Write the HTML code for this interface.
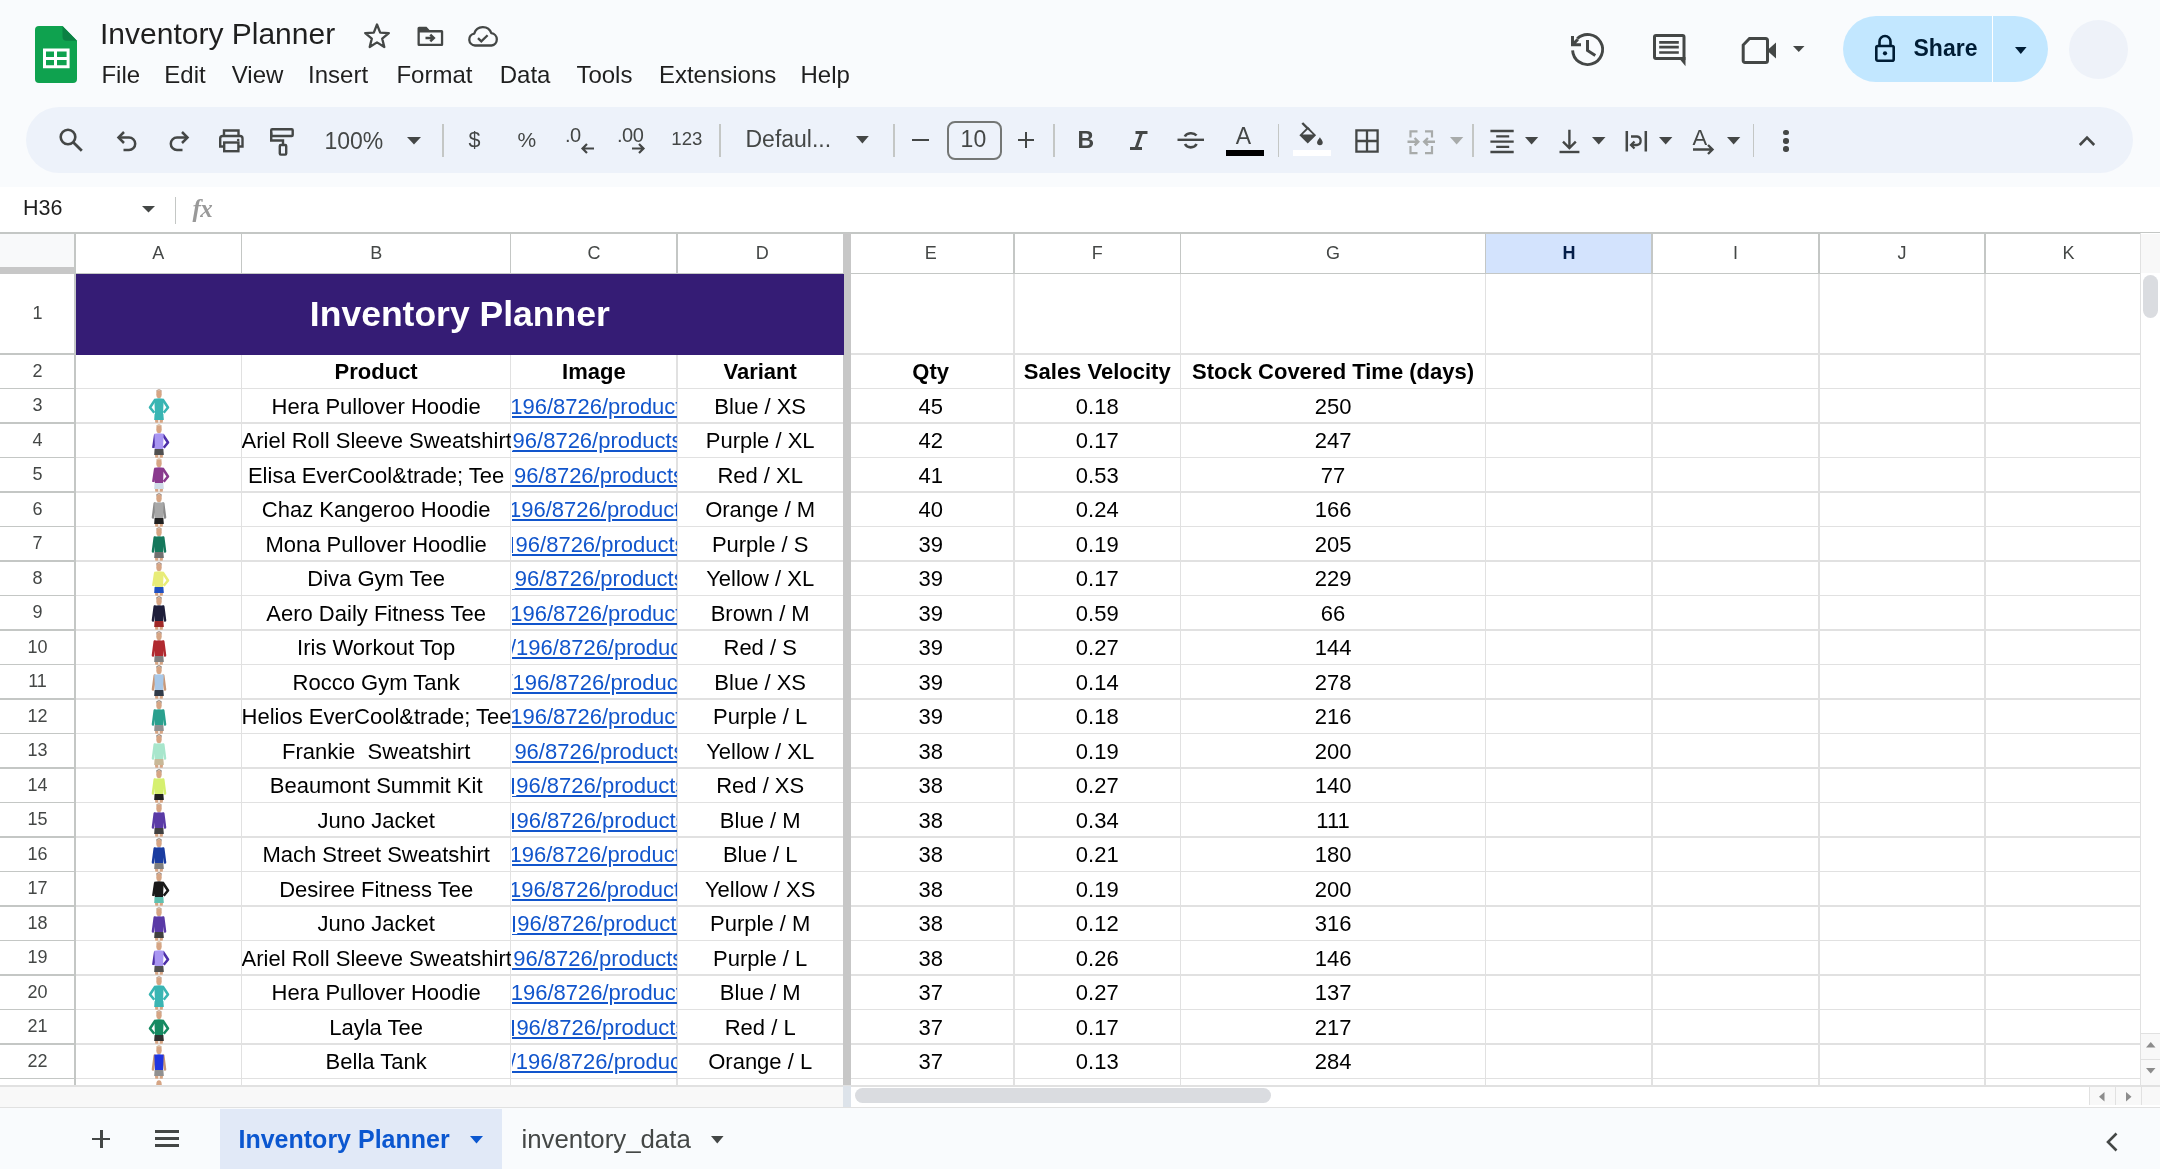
<!DOCTYPE html>
<html><head><meta charset="utf-8"><title>Inventory Planner - Google Sheets</title>
<style>
html,body{margin:0;padding:0;}
body{width:2160px;height:1169px;overflow:hidden;position:relative;background:#f9fbfd;font-family:"Liberation Sans",sans-serif;}
svg{display:block;overflow:visible}
</style></head><body>
<div style="position:absolute;left:0;top:0;width:2160px;height:1169px;overflow:hidden;will-change:transform">
<div style="position:absolute;left:0.00px;top:0.00px;width:2160.00px;height:187.00px;background:#f9fbfd;"></div>
<svg style="position:absolute;left:35.00px;top:26.00px" width="42" height="57" viewBox="0 0 42 57">
<path d="M4 0H27.5L42 14.7V53A4 4 0 0 1 38 57H4A4 4 0 0 1 0 53V4A4 4 0 0 1 4 0Z" fill="#0fa24f"/>
<path d="M27.5 0L42 14.7H31.5A4 4 0 0 1 27.5 10.7Z" fill="#0b8043"/>
<path d="M8 22.6H34.6V42.2H8Z M11 25.6V31H19V25.6Z M22 25.6V31H31.6V25.6Z M11 34V39.2H19V34Z M22 34V39.2H31.6V34Z" fill="#fff" fill-rule="evenodd"/>
</svg>
<div style="position:absolute;left:100.00px;top:16.65px;font-size:30px;line-height:33.510px;color:#1f1f1f;font-weight:normal;text-align:left;white-space:nowrap;">Inventory Planner</div>
<svg style="position:absolute;left:363.00px;top:22.00px" width="28" height="27" viewBox="0 0 28 27"><path d="M14 2.5L17.2 10.6L25.8 11.1L19.2 16.6L21.3 25L14 20.4L6.7 25L8.8 16.6L2.2 11.1L10.8 10.6Z" fill="none" stroke="#444746" stroke-width="2.3" stroke-linejoin="round"/></svg>
<svg style="position:absolute;left:415.00px;top:26.00px" width="30" height="22" viewBox="0 0 30 22"><path d="M2.5 2.3Q2.5 0.8 4 0.8H11.5L14.5 3.9H26.7Q28.2 3.9 28.2 5.4V18.5Q28.2 20 26.7 20H4Q2.5 20 2.5 18.5Z M4.8 6.4V17.7H25.9V6.4Z" fill="#444746" fill-rule="evenodd"/><path d="M10.5 12H18.5M15.3 8.6L18.8 12L15.3 15.4" fill="none" stroke="#444746" stroke-width="2.5"/></svg>
<svg style="position:absolute;left:467.00px;top:25.00px" width="32" height="23" viewBox="0 0 32 23"><path d="M8 20.5A6 6 0 0 1 7.2 8.6A9 9 0 0 1 24.3 8.2A6.2 6.2 0 0 1 24.5 20.5Z" fill="none" stroke="#444746" stroke-width="2.3" stroke-linejoin="round"/><path d="M11 13.2L14.3 16.4L20.6 10.2" fill="none" stroke="#444746" stroke-width="2.3"/></svg>
<div style="position:absolute;left:101.40px;top:62.28px;font-size:24px;line-height:26.808px;color:#1f1f1f;font-weight:normal;text-align:left;white-space:nowrap;">File</div>
<div style="position:absolute;left:164.30px;top:62.28px;font-size:24px;line-height:26.808px;color:#1f1f1f;font-weight:normal;text-align:left;white-space:nowrap;">Edit</div>
<div style="position:absolute;left:231.80px;top:62.28px;font-size:24px;line-height:26.808px;color:#1f1f1f;font-weight:normal;text-align:left;white-space:nowrap;">View</div>
<div style="position:absolute;left:308.10px;top:62.28px;font-size:24px;line-height:26.808px;color:#1f1f1f;font-weight:normal;text-align:left;white-space:nowrap;">Insert</div>
<div style="position:absolute;left:396.40px;top:62.28px;font-size:24px;line-height:26.808px;color:#1f1f1f;font-weight:normal;text-align:left;white-space:nowrap;">Format</div>
<div style="position:absolute;left:499.75px;top:62.28px;font-size:24px;line-height:26.808px;color:#1f1f1f;font-weight:normal;text-align:left;white-space:nowrap;">Data</div>
<div style="position:absolute;left:576.40px;top:62.28px;font-size:24px;line-height:26.808px;color:#1f1f1f;font-weight:normal;text-align:left;white-space:nowrap;">Tools</div>
<div style="position:absolute;left:658.90px;top:62.28px;font-size:24px;line-height:26.808px;color:#1f1f1f;font-weight:normal;text-align:left;white-space:nowrap;">Extensions</div>
<div style="position:absolute;left:800.50px;top:62.28px;font-size:24px;line-height:26.808px;color:#1f1f1f;font-weight:normal;text-align:left;white-space:nowrap;">Help</div>
<svg style="position:absolute;left:1565.00px;top:28.00px" width="45" height="42" viewBox="0 0 45 42"><path d="M7.6 22.3A15 15 0 1 0 12.3 10.6" fill="none" stroke="#444746" stroke-width="2.9"/>
<path d="M7.5 8V16.8H16M7.5 16.8L12.8 11.4" fill="none" stroke="#444746" stroke-width="3"/><path d="M22.5 12V22.5L30.3 27.6" fill="none" stroke="#444746" stroke-width="3"/></svg>
<svg style="position:absolute;left:1652.00px;top:33.00px" width="36" height="36" viewBox="0 0 36 36"><path d="M2.5 4A1.5 1.5 0 0 1 4 2.5H30.5A1.5 1.5 0 0 1 32 4V25.5H4A1.5 1.5 0 0 1 2.5 24Z" fill="none" stroke="#444746" stroke-width="3"/>
<path d="M26 24L33.5 24V33.3Z" fill="#444746"/><path d="M7.2 9.3H26.8M7.2 14.2H26.8M7.2 19.5H26.8" stroke="#444746" stroke-width="2.7"/></svg>
<svg style="position:absolute;left:1741.00px;top:36.00px" width="38" height="29" viewBox="0 0 38 29"><path d="M8.5 2.5H24.5A2 2 0 0 1 26.5 4.5V24.5A2 2 0 0 1 24.5 26.5H4A1.8 1.8 0 0 1 2.2 24.7V9Z" fill="none" stroke="#444746" stroke-width="3"/>
<path d="M26 14.5L35 6.5V22.5Z" fill="#444746"/></svg>
<svg style="position:absolute;left:1793.45px;top:45.60px" width="11.5" height="6.1" viewBox="0 0 11.5 6.1"><path d="M0 0H11.5L5.75 6.1Z" fill="#444746"/></svg>
<div style="position:absolute;left:1843.00px;top:16.40px;width:204.50px;height:65.70px;background:#c2e7ff;border-radius:33px;"></div>
<div style="position:absolute;left:1992.20px;top:16.40px;width:1.20px;height:65.70px;background:#ffffff;"></div>
<svg style="position:absolute;left:1873.00px;top:33.00px" width="24" height="30" viewBox="0 0 24 30"><path d="M6.5 13V8.5A5.5 5.5 0 0 1 17.5 8.5V13" fill="none" stroke="#001d35" stroke-width="2.6"/>
<rect x="3.3" y="13" width="17.4" height="14.7" rx="1.5" fill="none" stroke="#001d35" stroke-width="2.6"/><circle cx="12" cy="20.3" r="2.1" fill="#001d35"/></svg>
<div style="position:absolute;left:1913.50px;top:36.39px;font-size:23px;line-height:25.691px;color:#001d35;font-weight:bold;text-align:left;white-space:nowrap;">Share</div>
<svg style="position:absolute;left:2014.80px;top:47.40px" width="11.6" height="6.9" viewBox="0 0 11.6 6.9"><path d="M0 0H11.6L5.8 6.9Z" fill="#001d35"/></svg>
<div style="position:absolute;left:2068.7px;top:19.9px;width:59.5px;height:59px;border-radius:50%;background:#eef2f9"></div>
<div style="position:absolute;left:26.00px;top:107.00px;width:2107.00px;height:66.30px;background:#edf2fa;border-radius:33px;"></div>
<svg style="position:absolute;left:58.00px;top:127.00px" width="27" height="27" viewBox="0 0 27 27"><circle cx="10" cy="10" r="7.3" fill="none" stroke="#444746" stroke-width="2.6"/><path d="M15.2 15.2L23.8 23.8" stroke="#444746" stroke-width="2.8"/></svg>
<svg style="position:absolute;left:115.00px;top:129.00px" width="24" height="22" viewBox="0 0 24 22"><path d="M3.5 8.5H14A6.2 6.2 0 0 1 14 20.9H8.5" fill="none" stroke="#444746" stroke-width="2.5"/><path d="M9 3L3.5 8.5L9 14" fill="none" stroke="#444746" stroke-width="2.5"/></svg>
<svg style="position:absolute;left:167.00px;top:129.00px" width="24" height="22" viewBox="0 0 24 22"><path d="M20.5 8.5H10A6.2 6.2 0 0 0 10 20.9H15.5" fill="none" stroke="#444746" stroke-width="2.5"/><path d="M15 3L20.5 8.5L15 14" fill="none" stroke="#444746" stroke-width="2.5"/></svg>
<svg style="position:absolute;left:217.00px;top:128.00px" width="30" height="26" viewBox="0 0 30 26"><path d="M7 8V2.5H21.5V8" fill="none" stroke="#444746" stroke-width="2.4"/>
<path d="M7 18.5H3.2V10.5A2.5 2.5 0 0 1 5.7 8H23A2.5 2.5 0 0 1 25.5 10.5V18.5H21.5" fill="none" stroke="#444746" stroke-width="2.4"/>
<rect x="7.2" y="14.5" width="14.2" height="8.7" fill="none" stroke="#444746" stroke-width="2.4"/><circle cx="21.2" cy="12" r="1.3" fill="#444746"/></svg>
<svg style="position:absolute;left:269.00px;top:127.00px" width="28" height="30" viewBox="0 0 28 30"><rect x="2.2" y="2.2" width="21.5" height="6.8" rx="1" fill="none" stroke="#444746" stroke-width="2.4"/>
<path d="M2.2 5.5V13.5H14V18" fill="none" stroke="#444746" stroke-width="2.4"/><rect x="10.8" y="18" width="6.4" height="9.6" rx="1" fill="none" stroke="#444746" stroke-width="2.4"/></svg>
<div style="position:absolute;left:324.50px;top:128.59px;font-size:23px;line-height:25.691px;color:#444746;font-weight:normal;text-align:left;white-space:nowrap;">100%</div>
<svg style="position:absolute;left:407.20px;top:136.80px" width="14" height="7.4" viewBox="0 0 14 7.4"><path d="M0 0H14L7.0 7.4Z" fill="#444746"/></svg>
<div style="position:absolute;left:442.25px;top:124.00px;width:1.50px;height:32.50px;background:#c4c7c5;"></div>
<div style="position:absolute;left:468.50px;top:127.74px;font-size:21.5px;line-height:24.015px;color:#444746;font-weight:normal;text-align:left;white-space:nowrap;">$</div>
<div style="position:absolute;left:517.50px;top:128.00px;font-size:21px;line-height:23.457px;color:#444746;font-weight:normal;text-align:left;white-space:nowrap;">%</div>
<div style="position:absolute;left:565.00px;top:124.40px;font-size:20px;line-height:22.340px;color:#444746;font-weight:normal;text-align:left;white-space:nowrap;letter-spacing:-0.5px">.0</div>
<svg style="position:absolute;left:578.00px;top:141.00px" width="18" height="14" viewBox="0 0 18 14"><path d="M16 7.5H4.5M9 3L4.5 7.5L9 12" fill="none" stroke="#444746" stroke-width="2.2"/></svg>
<div style="position:absolute;left:617.00px;top:124.40px;font-size:20px;line-height:22.340px;color:#444746;font-weight:normal;text-align:left;white-space:nowrap;letter-spacing:-0.5px">.00</div>
<svg style="position:absolute;left:630.00px;top:141.00px" width="18" height="14" viewBox="0 0 18 14"><path d="M2 7.5H13.5M9 3L13.5 7.5L9 12" fill="none" stroke="#444746" stroke-width="2.2"/></svg>
<div style="position:absolute;left:671.30px;top:129.17px;font-size:18.6px;line-height:20.776px;color:#444746;font-weight:normal;text-align:left;white-space:nowrap;">123</div>
<div style="position:absolute;left:719.25px;top:124.00px;width:1.50px;height:32.50px;background:#c4c7c5;"></div>
<div style="position:absolute;left:745.50px;top:126.78px;font-size:23px;line-height:25.691px;color:#444746;font-weight:normal;text-align:left;white-space:nowrap;">Defaul...</div>
<svg style="position:absolute;left:856.20px;top:135.90px" width="12.8" height="7.4" viewBox="0 0 12.8 7.4"><path d="M0 0H12.8L6.4 7.4Z" fill="#444746"/></svg>
<div style="position:absolute;left:893.25px;top:124.00px;width:1.50px;height:32.50px;background:#c4c7c5;"></div>
<div style="position:absolute;left:912.40px;top:138.50px;width:16.60px;height:2.20px;background:#444746;"></div>
<div style="position:absolute;left:946.5px;top:120.8px;width:55.5px;height:39px;box-sizing:border-box;border:2px solid #747775;border-radius:8px"></div>
<div style="position:absolute;left:960.60px;top:127.19px;font-size:23px;line-height:25.691px;color:#444746;font-weight:normal;text-align:left;white-space:nowrap;">10</div>
<div style="position:absolute;left:1017.80px;top:138.90px;width:16.60px;height:2.40px;background:#444746;"></div>
<div style="position:absolute;left:1024.90px;top:131.80px;width:2.40px;height:16.60px;background:#444746;"></div>
<div style="position:absolute;left:1053.25px;top:124.00px;width:1.50px;height:32.50px;background:#c4c7c5;"></div>
<div style="position:absolute;left:1077.50px;top:128.38px;font-size:23px;line-height:25.691px;color:#444746;font-weight:bold;text-align:left;white-space:nowrap;">B</div>
<svg style="position:absolute;left:1128.00px;top:130.00px" width="22" height="21" viewBox="0 0 22 21"><path d="M7.5 2.5H19.5M2 18.5H14M13.6 2.5L8 18.5" fill="none" stroke="#444746" stroke-width="3"/></svg>
<svg style="position:absolute;left:1176.00px;top:130.00px" width="30" height="22" viewBox="0 0 30 22"><path d="M1.5 9.8H28" stroke="#444746" stroke-width="2.4"/><path d="M20.5 5.5A6.5 4.8 0 0 0 8.8 6.5M9 14A6.3 5.5 0 0 0 20.6 14" fill="none" stroke="#444746" stroke-width="2.6"/></svg>
<div style="position:absolute;left:1235.80px;top:124.38px;font-size:23px;line-height:25.691px;color:#444746;font-weight:normal;text-align:left;white-space:nowrap;">A</div>
<div style="position:absolute;left:1226.00px;top:149.70px;width:37.70px;height:6.40px;background:#000000;"></div>
<div style="position:absolute;left:1277.85px;top:124.00px;width:1.50px;height:32.50px;background:#c4c7c5;"></div>
<svg style="position:absolute;left:1297.00px;top:121.00px" width="28" height="25" viewBox="0 0 28 25"><path d="M5.3 2L12.4 9.1" stroke="#444746" stroke-width="2.4"/><path d="M2.4 14.2L10.75 5.85L19.1 14.2L10.75 22.55Z" fill="#444746"/><path d="M5.6 13.6L10.75 8.45L15.9 13.6Z" fill="#edf2fa"/><path d="M22.9 16.3C20.6 19.6 20.1 20.6 20.1 21.5A2.8 2.8 0 0 0 25.7 21.5C25.7 20.6 25.2 19.6 22.9 16.3Z" fill="#444746"/></svg>
<div style="position:absolute;left:1293.00px;top:149.70px;width:37.80px;height:6.40px;background:#ffffff;"></div>
<svg style="position:absolute;left:1354.00px;top:128.00px" width="26" height="26" viewBox="0 0 26 26"><path d="M2.4 2.4H23.6V23.6H2.4Z M13 2.4V23.6 M2.4 13H23.6" fill="none" stroke="#444746" stroke-width="2.3"/></svg>
<svg style="position:absolute;left:1407.00px;top:128.50px" width="29" height="26" viewBox="0 0 29 26"><path d="M10.5 2.3H3.5V8.5 M3.5 17V24.2H10.5 M18 2.3H25V8.5 M25 17V24.2H18" fill="none" stroke="#a8abaa" stroke-width="2.2"/><path d="M0.5 12.7H11 M7.6 9L11.3 12.7L7.6 16.4 M28 12.7H17.5 M20.9 9L17.2 12.7L20.9 16.4" fill="none" stroke="#a8abaa" stroke-width="2.4"/></svg>
<svg style="position:absolute;left:1449.75px;top:137.00px" width="13.3" height="7.4" viewBox="0 0 13.3 7.4"><path d="M0 0H13.3L6.65 7.4Z" fill="#a8abaa"/></svg>
<div style="position:absolute;left:1472.25px;top:124.00px;width:1.50px;height:32.50px;background:#c4c7c5;"></div>
<svg style="position:absolute;left:1489.00px;top:128.50px" width="27" height="26" viewBox="0 0 27 26"><path d="M1.4 2H24.7 M7.2 7.3H20.2 M1.4 12.6H24.7 M7.2 17.8H20.2 M1.4 23H24.7" stroke="#444746" stroke-width="2.3"/></svg>
<svg style="position:absolute;left:1524.80px;top:137.00px" width="13.2" height="7.4" viewBox="0 0 13.2 7.4"><path d="M0 0H13.2L6.6 7.4Z" fill="#444746"/></svg>
<svg style="position:absolute;left:1558.00px;top:128.50px" width="23" height="26" viewBox="0 0 23 26"><path d="M11.4 0.8V19 M5 12.7L11.4 19.1L17.8 12.7" fill="none" stroke="#444746" stroke-width="2.4"/><path d="M1.5 23H21.4" stroke="#444746" stroke-width="2.4"/></svg>
<svg style="position:absolute;left:1592.25px;top:137.00px" width="13.5" height="7.4" viewBox="0 0 13.5 7.4"><path d="M0 0H13.5L6.75 7.4Z" fill="#444746"/></svg>
<svg style="position:absolute;left:1624.00px;top:130.00px" width="25" height="23" viewBox="0 0 25 23"><path d="M2.8 1V21.5 M21.8 1V21.5" stroke="#444746" stroke-width="2.5"/><path d="M7.5 15H13A4.3 4.3 0 0 0 13 6.5H7" fill="none" stroke="#444746" stroke-width="2.3"/><path d="M10.5 11.5L7 15L10.5 18.5" fill="none" stroke="#444746" stroke-width="2.3"/></svg>
<svg style="position:absolute;left:1659.40px;top:137.00px" width="13.4" height="7.4" viewBox="0 0 13.4 7.4"><path d="M0 0H13.4L6.7 7.4Z" fill="#444746"/></svg>
<div style="position:absolute;left:1692.50px;top:126.09px;font-size:22px;line-height:24.574px;color:#444746;font-weight:normal;text-align:left;white-space:nowrap;">A</div>
<svg style="position:absolute;left:1692.00px;top:141.00px" width="26" height="14" viewBox="0 0 26 14"><path d="M1 8.5H20M16 4L20.5 8.5L16 13" fill="none" stroke="#444746" stroke-width="2.4"/></svg>
<svg style="position:absolute;left:1726.95px;top:137.00px" width="13.3" height="7.4" viewBox="0 0 13.3 7.4"><path d="M0 0H13.3L6.65 7.4Z" fill="#444746"/></svg>
<div style="position:absolute;left:1752.75px;top:124.00px;width:1.50px;height:32.50px;background:#c4c7c5;"></div>
<div style="position:absolute;left:1783.3px;top:130.0px;width:5.4px;height:5.4px;border-radius:50%;background:#444746"></div>
<div style="position:absolute;left:1783.3px;top:138.3px;width:5.4px;height:5.4px;border-radius:50%;background:#444746"></div>
<div style="position:absolute;left:1783.3px;top:146.3px;width:5.4px;height:5.4px;border-radius:50%;background:#444746"></div>
<svg style="position:absolute;left:2075.00px;top:132.00px" width="24" height="16" viewBox="0 0 24 16"><path d="M4.8 13L12 5.6L19.2 13" fill="none" stroke="#444746" stroke-width="2.6"/></svg>
<div style="position:absolute;left:0.00px;top:187.00px;width:2160.00px;height:46.00px;background:#ffffff;"></div>
<div style="position:absolute;left:23.00px;top:196.44px;font-size:21.5px;line-height:24.015px;color:#1f1f1f;font-weight:normal;text-align:left;white-space:nowrap;">H36</div>
<svg style="position:absolute;left:142.00px;top:205.90px" width="13" height="6.6" viewBox="0 0 13 6.6"><path d="M0 0H13L6.5 6.6Z" fill="#444746"/></svg>
<div style="position:absolute;left:174.80px;top:197.00px;width:1.50px;height:27.00px;background:#c4c7c5;"></div>
<div style="position:absolute;left:192.50px;top:194.88px;font-size:25px;line-height:27.925px;color:#999999;font-weight:bold;text-align:left;white-space:nowrap;font-family:'Liberation Serif',serif;font-style:italic;letter-spacing:-0.5px">fx</div>
<div style="position:absolute;left:0.00px;top:233.00px;width:2160.00px;height:853.00px;background:#ffffff;"></div>
<div style="position:absolute;left:0.00px;top:233.00px;width:74.50px;height:34.00px;background:#f8f9fa;"></div>
<div style="position:absolute;left:0.00px;top:267.30px;width:74.50px;height:6.30px;background:#c7c7c7;"></div>
<div style="position:absolute;left:1486.30px;top:233.50px;width:165.40px;height:39.00px;background:#d3e3fd;"></div>
<div style="position:absolute;left:75.00px;top:243.01px;width:166.6px;font-size:18px;line-height:20.106px;color:#444746;font-weight:normal;text-align:center;white-space:nowrap;">A</div>
<div style="position:absolute;left:241.60px;top:243.01px;width:269.1px;font-size:18px;line-height:20.106px;color:#444746;font-weight:normal;text-align:center;white-space:nowrap;">B</div>
<div style="position:absolute;left:510.70px;top:243.01px;width:166.40000000000003px;font-size:18px;line-height:20.106px;color:#444746;font-weight:normal;text-align:center;white-space:nowrap;">C</div>
<div style="position:absolute;left:677.10px;top:243.01px;width:170.19999999999993px;font-size:18px;line-height:20.106px;color:#444746;font-weight:normal;text-align:center;white-space:nowrap;">D</div>
<div style="position:absolute;left:847.30px;top:243.01px;width:166.70000000000005px;font-size:18px;line-height:20.106px;color:#444746;font-weight:normal;text-align:center;white-space:nowrap;">E</div>
<div style="position:absolute;left:1014.00px;top:243.01px;width:166.5px;font-size:18px;line-height:20.106px;color:#444746;font-weight:normal;text-align:center;white-space:nowrap;">F</div>
<div style="position:absolute;left:1180.50px;top:243.01px;width:305.0999999999999px;font-size:18px;line-height:20.106px;color:#444746;font-weight:normal;text-align:center;white-space:nowrap;">G</div>
<div style="position:absolute;left:1485.60px;top:243.01px;width:166.60000000000014px;font-size:18px;line-height:20.106px;color:#041e49;font-weight:bold;text-align:center;white-space:nowrap;">H</div>
<div style="position:absolute;left:1652.20px;top:243.01px;width:166.5999999999999px;font-size:18px;line-height:20.106px;color:#444746;font-weight:normal;text-align:center;white-space:nowrap;">I</div>
<div style="position:absolute;left:1818.80px;top:243.01px;width:166.4000000000001px;font-size:18px;line-height:20.106px;color:#444746;font-weight:normal;text-align:center;white-space:nowrap;">J</div>
<div style="position:absolute;left:1985.20px;top:243.01px;width:166.39999999999986px;font-size:18px;line-height:20.106px;color:#444746;font-weight:normal;text-align:center;white-space:nowrap;">K</div>
<div style="position:absolute;left:0.00px;top:303.41px;width:75px;font-size:18px;line-height:20.106px;color:#444746;font-weight:normal;text-align:center;white-space:nowrap;">1</div>
<div style="position:absolute;left:0.00px;top:361.06px;width:75px;font-size:18px;line-height:20.106px;color:#444746;font-weight:normal;text-align:center;white-space:nowrap;">2</div>
<div style="position:absolute;left:0.00px;top:395.46px;width:75px;font-size:18px;line-height:20.106px;color:#444746;font-weight:normal;text-align:center;white-space:nowrap;">3</div>
<div style="position:absolute;left:0.00px;top:429.96px;width:75px;font-size:18px;line-height:20.106px;color:#444746;font-weight:normal;text-align:center;white-space:nowrap;">4</div>
<div style="position:absolute;left:0.00px;top:464.46px;width:75px;font-size:18px;line-height:20.106px;color:#444746;font-weight:normal;text-align:center;white-space:nowrap;">5</div>
<div style="position:absolute;left:0.00px;top:498.96px;width:75px;font-size:18px;line-height:20.106px;color:#444746;font-weight:normal;text-align:center;white-space:nowrap;">6</div>
<div style="position:absolute;left:0.00px;top:533.46px;width:75px;font-size:18px;line-height:20.106px;color:#444746;font-weight:normal;text-align:center;white-space:nowrap;">7</div>
<div style="position:absolute;left:0.00px;top:567.96px;width:75px;font-size:18px;line-height:20.106px;color:#444746;font-weight:normal;text-align:center;white-space:nowrap;">8</div>
<div style="position:absolute;left:0.00px;top:602.46px;width:75px;font-size:18px;line-height:20.106px;color:#444746;font-weight:normal;text-align:center;white-space:nowrap;">9</div>
<div style="position:absolute;left:0.00px;top:636.96px;width:75px;font-size:18px;line-height:20.106px;color:#444746;font-weight:normal;text-align:center;white-space:nowrap;">10</div>
<div style="position:absolute;left:0.00px;top:671.46px;width:75px;font-size:18px;line-height:20.106px;color:#444746;font-weight:normal;text-align:center;white-space:nowrap;">11</div>
<div style="position:absolute;left:0.00px;top:705.96px;width:75px;font-size:18px;line-height:20.106px;color:#444746;font-weight:normal;text-align:center;white-space:nowrap;">12</div>
<div style="position:absolute;left:0.00px;top:740.46px;width:75px;font-size:18px;line-height:20.106px;color:#444746;font-weight:normal;text-align:center;white-space:nowrap;">13</div>
<div style="position:absolute;left:0.00px;top:774.96px;width:75px;font-size:18px;line-height:20.106px;color:#444746;font-weight:normal;text-align:center;white-space:nowrap;">14</div>
<div style="position:absolute;left:0.00px;top:809.46px;width:75px;font-size:18px;line-height:20.106px;color:#444746;font-weight:normal;text-align:center;white-space:nowrap;">15</div>
<div style="position:absolute;left:0.00px;top:843.96px;width:75px;font-size:18px;line-height:20.106px;color:#444746;font-weight:normal;text-align:center;white-space:nowrap;">16</div>
<div style="position:absolute;left:0.00px;top:878.46px;width:75px;font-size:18px;line-height:20.106px;color:#444746;font-weight:normal;text-align:center;white-space:nowrap;">17</div>
<div style="position:absolute;left:0.00px;top:912.96px;width:75px;font-size:18px;line-height:20.106px;color:#444746;font-weight:normal;text-align:center;white-space:nowrap;">18</div>
<div style="position:absolute;left:0.00px;top:947.46px;width:75px;font-size:18px;line-height:20.106px;color:#444746;font-weight:normal;text-align:center;white-space:nowrap;">19</div>
<div style="position:absolute;left:0.00px;top:981.96px;width:75px;font-size:18px;line-height:20.106px;color:#444746;font-weight:normal;text-align:center;white-space:nowrap;">20</div>
<div style="position:absolute;left:0.00px;top:1016.46px;width:75px;font-size:18px;line-height:20.106px;color:#444746;font-weight:normal;text-align:center;white-space:nowrap;">21</div>
<div style="position:absolute;left:0.00px;top:1050.96px;width:75px;font-size:18px;line-height:20.106px;color:#444746;font-weight:normal;text-align:center;white-space:nowrap;">22</div>
<div style="position:absolute;left:75.00px;top:353.20px;width:2065.50px;height:1.60px;background:#e1e1e1;"></div>
<div style="position:absolute;left:75.00px;top:387.50px;width:2065.50px;height:1.60px;background:#e1e1e1;"></div>
<div style="position:absolute;left:75.00px;top:422.00px;width:2065.50px;height:1.60px;background:#e1e1e1;"></div>
<div style="position:absolute;left:75.00px;top:456.50px;width:2065.50px;height:1.60px;background:#e1e1e1;"></div>
<div style="position:absolute;left:75.00px;top:491.00px;width:2065.50px;height:1.60px;background:#e1e1e1;"></div>
<div style="position:absolute;left:75.00px;top:525.50px;width:2065.50px;height:1.60px;background:#e1e1e1;"></div>
<div style="position:absolute;left:75.00px;top:560.00px;width:2065.50px;height:1.60px;background:#e1e1e1;"></div>
<div style="position:absolute;left:75.00px;top:594.50px;width:2065.50px;height:1.60px;background:#e1e1e1;"></div>
<div style="position:absolute;left:75.00px;top:629.00px;width:2065.50px;height:1.60px;background:#e1e1e1;"></div>
<div style="position:absolute;left:75.00px;top:663.50px;width:2065.50px;height:1.60px;background:#e1e1e1;"></div>
<div style="position:absolute;left:75.00px;top:698.00px;width:2065.50px;height:1.60px;background:#e1e1e1;"></div>
<div style="position:absolute;left:75.00px;top:732.50px;width:2065.50px;height:1.60px;background:#e1e1e1;"></div>
<div style="position:absolute;left:75.00px;top:767.00px;width:2065.50px;height:1.60px;background:#e1e1e1;"></div>
<div style="position:absolute;left:75.00px;top:801.50px;width:2065.50px;height:1.60px;background:#e1e1e1;"></div>
<div style="position:absolute;left:75.00px;top:836.00px;width:2065.50px;height:1.60px;background:#e1e1e1;"></div>
<div style="position:absolute;left:75.00px;top:870.50px;width:2065.50px;height:1.60px;background:#e1e1e1;"></div>
<div style="position:absolute;left:75.00px;top:905.00px;width:2065.50px;height:1.60px;background:#e1e1e1;"></div>
<div style="position:absolute;left:75.00px;top:939.50px;width:2065.50px;height:1.60px;background:#e1e1e1;"></div>
<div style="position:absolute;left:75.00px;top:974.00px;width:2065.50px;height:1.60px;background:#e1e1e1;"></div>
<div style="position:absolute;left:75.00px;top:1008.50px;width:2065.50px;height:1.60px;background:#e1e1e1;"></div>
<div style="position:absolute;left:75.00px;top:1043.00px;width:2065.50px;height:1.60px;background:#e1e1e1;"></div>
<div style="position:absolute;left:75.00px;top:1077.50px;width:2065.50px;height:1.60px;background:#e1e1e1;"></div>
<div style="position:absolute;left:240.80px;top:273.00px;width:1.60px;height:813.00px;background:#e1e1e1;"></div>
<div style="position:absolute;left:509.90px;top:273.00px;width:1.60px;height:813.00px;background:#e1e1e1;"></div>
<div style="position:absolute;left:676.30px;top:273.00px;width:1.60px;height:813.00px;background:#e1e1e1;"></div>
<div style="position:absolute;left:1013.20px;top:273.00px;width:1.60px;height:813.00px;background:#e1e1e1;"></div>
<div style="position:absolute;left:1179.70px;top:273.00px;width:1.60px;height:813.00px;background:#e1e1e1;"></div>
<div style="position:absolute;left:1484.80px;top:273.00px;width:1.60px;height:813.00px;background:#e1e1e1;"></div>
<div style="position:absolute;left:1651.40px;top:273.00px;width:1.60px;height:813.00px;background:#e1e1e1;"></div>
<div style="position:absolute;left:1818.00px;top:273.00px;width:1.60px;height:813.00px;background:#e1e1e1;"></div>
<div style="position:absolute;left:1984.40px;top:273.00px;width:1.60px;height:813.00px;background:#e1e1e1;"></div>
<div style="position:absolute;left:2139.70px;top:273.00px;width:1.60px;height:813.00px;background:#e1e1e1;"></div>
<div style="position:absolute;left:240.80px;top:233.00px;width:1.60px;height:40.00px;background:#c4c7c5;"></div>
<div style="position:absolute;left:509.90px;top:233.00px;width:1.60px;height:40.00px;background:#c4c7c5;"></div>
<div style="position:absolute;left:676.30px;top:233.00px;width:1.60px;height:40.00px;background:#c4c7c5;"></div>
<div style="position:absolute;left:1013.20px;top:233.00px;width:1.60px;height:40.00px;background:#c4c7c5;"></div>
<div style="position:absolute;left:1179.70px;top:233.00px;width:1.60px;height:40.00px;background:#c4c7c5;"></div>
<div style="position:absolute;left:1484.80px;top:233.00px;width:1.60px;height:40.00px;background:#c4c7c5;"></div>
<div style="position:absolute;left:1651.40px;top:233.00px;width:1.60px;height:40.00px;background:#c4c7c5;"></div>
<div style="position:absolute;left:1818.00px;top:233.00px;width:1.60px;height:40.00px;background:#c4c7c5;"></div>
<div style="position:absolute;left:1984.40px;top:233.00px;width:1.60px;height:40.00px;background:#c4c7c5;"></div>
<div style="position:absolute;left:2139.70px;top:233.00px;width:1.60px;height:40.00px;background:#c4c7c5;"></div>
<div style="position:absolute;left:74.20px;top:233.00px;width:1.60px;height:853.00px;background:#c4c7c5;"></div>
<div style="position:absolute;left:0.00px;top:232.20px;width:2160.00px;height:1.60px;background:#c4c7c5;"></div>
<div style="position:absolute;left:75.00px;top:272.60px;width:2066.00px;height:1.60px;background:#c4c7c5;"></div>
<div style="position:absolute;left:0.00px;top:353.20px;width:75.00px;height:1.60px;background:#c4c7c5;"></div>
<div style="position:absolute;left:0.00px;top:387.50px;width:75.00px;height:1.60px;background:#c4c7c5;"></div>
<div style="position:absolute;left:0.00px;top:422.00px;width:75.00px;height:1.60px;background:#c4c7c5;"></div>
<div style="position:absolute;left:0.00px;top:456.50px;width:75.00px;height:1.60px;background:#c4c7c5;"></div>
<div style="position:absolute;left:0.00px;top:491.00px;width:75.00px;height:1.60px;background:#c4c7c5;"></div>
<div style="position:absolute;left:0.00px;top:525.50px;width:75.00px;height:1.60px;background:#c4c7c5;"></div>
<div style="position:absolute;left:0.00px;top:560.00px;width:75.00px;height:1.60px;background:#c4c7c5;"></div>
<div style="position:absolute;left:0.00px;top:594.50px;width:75.00px;height:1.60px;background:#c4c7c5;"></div>
<div style="position:absolute;left:0.00px;top:629.00px;width:75.00px;height:1.60px;background:#c4c7c5;"></div>
<div style="position:absolute;left:0.00px;top:663.50px;width:75.00px;height:1.60px;background:#c4c7c5;"></div>
<div style="position:absolute;left:0.00px;top:698.00px;width:75.00px;height:1.60px;background:#c4c7c5;"></div>
<div style="position:absolute;left:0.00px;top:732.50px;width:75.00px;height:1.60px;background:#c4c7c5;"></div>
<div style="position:absolute;left:0.00px;top:767.00px;width:75.00px;height:1.60px;background:#c4c7c5;"></div>
<div style="position:absolute;left:0.00px;top:801.50px;width:75.00px;height:1.60px;background:#c4c7c5;"></div>
<div style="position:absolute;left:0.00px;top:836.00px;width:75.00px;height:1.60px;background:#c4c7c5;"></div>
<div style="position:absolute;left:0.00px;top:870.50px;width:75.00px;height:1.60px;background:#c4c7c5;"></div>
<div style="position:absolute;left:0.00px;top:905.00px;width:75.00px;height:1.60px;background:#c4c7c5;"></div>
<div style="position:absolute;left:0.00px;top:939.50px;width:75.00px;height:1.60px;background:#c4c7c5;"></div>
<div style="position:absolute;left:0.00px;top:974.00px;width:75.00px;height:1.60px;background:#c4c7c5;"></div>
<div style="position:absolute;left:0.00px;top:1008.50px;width:75.00px;height:1.60px;background:#c4c7c5;"></div>
<div style="position:absolute;left:0.00px;top:1043.00px;width:75.00px;height:1.60px;background:#c4c7c5;"></div>
<div style="position:absolute;left:0.00px;top:1077.50px;width:75.00px;height:1.60px;background:#c4c7c5;"></div>
<div style="position:absolute;left:75.80px;top:274.00px;width:768.60px;height:80.50px;background:#351c75;"></div>
<div style="position:absolute;left:75.80px;top:294.57px;width:768px;font-size:35.5px;line-height:39.654px;color:#ffffff;font-weight:bold;text-align:center;white-space:nowrap;">Inventory Planner</div>
<div style="position:absolute;left:241.60px;top:360.39px;width:269.10px;height:24.57px;overflow:hidden;font-size:22px;line-height:24.574px;color:#000000;font-weight:bold;text-align:center;white-space:pre;">Product</div>
<div style="position:absolute;left:510.70px;top:360.39px;width:166.40px;height:24.57px;overflow:hidden;font-size:22px;line-height:24.574px;color:#000000;font-weight:bold;text-align:center;white-space:pre;">Image</div>
<div style="position:absolute;left:677.10px;top:360.39px;width:166.20px;height:24.57px;overflow:hidden;font-size:22px;line-height:24.574px;color:#000000;font-weight:bold;text-align:center;white-space:pre;">Variant</div>
<div style="position:absolute;left:847.30px;top:360.39px;width:166.70px;height:24.57px;overflow:hidden;font-size:22px;line-height:24.574px;color:#000000;font-weight:bold;text-align:center;white-space:pre;">Qty</div>
<div style="position:absolute;left:1014.00px;top:360.39px;width:166.50px;height:24.57px;overflow:hidden;font-size:22px;line-height:24.574px;color:#000000;font-weight:bold;text-align:center;white-space:pre;">Sales Velocity</div>
<div style="position:absolute;left:1180.50px;top:360.39px;width:305.10px;height:24.57px;overflow:hidden;font-size:22px;line-height:24.574px;color:#000000;font-weight:bold;text-align:center;white-space:pre;">Stock Covered Time (days)</div>
<div style="position:absolute;left:241.60px;top:394.89px;width:269.10px;height:24.57px;overflow:hidden;font-size:22px;line-height:24.574px;color:#000000;font-weight:normal;text-align:center;white-space:pre;">Hera Pullover Hoodie</div>
<div style="position:absolute;left:677.10px;top:394.89px;width:166.20px;height:24.57px;overflow:hidden;font-size:22px;line-height:24.574px;color:#000000;font-weight:normal;text-align:center;white-space:pre;">Blue / XS</div>
<div style="position:absolute;left:847.30px;top:394.89px;width:166.70px;height:24.57px;overflow:hidden;font-size:22px;line-height:24.574px;color:#000000;font-weight:normal;text-align:center;white-space:pre;">45</div>
<div style="position:absolute;left:1014.00px;top:394.89px;width:166.50px;height:24.57px;overflow:hidden;font-size:22px;line-height:24.574px;color:#000000;font-weight:normal;text-align:center;white-space:pre;">0.18</div>
<div style="position:absolute;left:1180.50px;top:394.89px;width:305.10px;height:24.57px;overflow:hidden;font-size:22px;line-height:24.574px;color:#000000;font-weight:normal;text-align:center;white-space:pre;">250</div>
<div style="position:absolute;left:511.5px;top:389.30px;width:165px;height:32px;overflow:hidden"><div style="position:absolute;left:-7.41px;top:5.59px;font-size:22px;line-height:24.574px;color:#1155cc;text-decoration:underline;white-space:nowrap">/196/8726/products/item-image.jpg</div></div>
<svg style="position:absolute;left:140.00px;top:388.30px" width="36" height="36" viewBox="0 0 36 36"><ellipse cx="19" cy="6.2" rx="2.7" ry="3.9" fill="#d6a584"/><path d="M16.3 5.5A2.7 3.4 0 0 1 21.7 5.5V3.8A2.7 2.2 0 0 0 16.3 3.8Z" fill="#8a5a3a"/>
<path d="M15.3 11.5L10 19.5L14.3 24.8M22.7 11.5L28 19.5L23.7 24.8" fill="none" stroke="#3ab5b3" stroke-width="2.6" stroke-linejoin="round"/><path d="M14.3 10.8Q19 9.6 23.7 10.8L23 26.3H15Z" fill="#3ab5b3"/>
<path d="M14.6 26H23.4L23.8 32H14.2Z" fill="#3ab5b3"/>
<path d="M15 32H18.3V34.8H15.3Z M19.7 32H23L22.7 34.8H19.7Z" fill="#d6a584"/></svg>
<div style="position:absolute;left:241.60px;top:429.39px;width:269.10px;height:24.57px;overflow:hidden;font-size:22px;line-height:24.574px;color:#000000;font-weight:normal;text-align:center;white-space:pre;">Ariel Roll Sleeve Sweatshirt</div>
<div style="position:absolute;left:677.10px;top:429.39px;width:166.20px;height:24.57px;overflow:hidden;font-size:22px;line-height:24.574px;color:#000000;font-weight:normal;text-align:center;white-space:pre;">Purple / XL</div>
<div style="position:absolute;left:847.30px;top:429.39px;width:166.70px;height:24.57px;overflow:hidden;font-size:22px;line-height:24.574px;color:#000000;font-weight:normal;text-align:center;white-space:pre;">42</div>
<div style="position:absolute;left:1014.00px;top:429.39px;width:166.50px;height:24.57px;overflow:hidden;font-size:22px;line-height:24.574px;color:#000000;font-weight:normal;text-align:center;white-space:pre;">0.17</div>
<div style="position:absolute;left:1180.50px;top:429.39px;width:305.10px;height:24.57px;overflow:hidden;font-size:22px;line-height:24.574px;color:#000000;font-weight:normal;text-align:center;white-space:pre;">247</div>
<div style="position:absolute;left:511.5px;top:423.80px;width:165px;height:32px;overflow:hidden"><div style="position:absolute;left:0px;top:27.10px;width:3.09px;height:1.6px;background:#1155cc"></div><div style="position:absolute;left:1.09px;top:5.59px;font-size:22px;line-height:24.574px;color:#1155cc;text-decoration:underline;white-space:nowrap">96/8726/products/item-image.jpg</div></div>
<svg style="position:absolute;left:140.00px;top:422.80px" width="36" height="36" viewBox="0 0 36 36"><ellipse cx="19" cy="6.2" rx="2.7" ry="3.9" fill="#d6a584"/><path d="M16.3 5.5A2.7 3.4 0 0 1 21.7 5.5V3.8A2.7 2.2 0 0 0 16.3 3.8Z" fill="#b08050"/>
<path d="M15.3 11.5L13.3 25M22.7 11.5L28 19.5L23.7 24.8" fill="none" stroke="#4e30a8" stroke-width="2.6" stroke-linejoin="round"/><path d="M14.3 10.8Q19 9.6 23.7 10.8L23 26.3H15Z" fill="#a996f2"/>
<path d="M14.6 26H23.4L23.8 32H14.2Z" fill="#505050"/>
<path d="M15 32H18.3V34.8H15.3Z M19.7 32H23L22.7 34.8H19.7Z" fill="#d6a584"/></svg>
<div style="position:absolute;left:241.60px;top:463.89px;width:269.10px;height:24.57px;overflow:hidden;font-size:22px;line-height:24.574px;color:#000000;font-weight:normal;text-align:center;white-space:pre;">Elisa EverCool&amp;trade; Tee</div>
<div style="position:absolute;left:677.10px;top:463.89px;width:166.20px;height:24.57px;overflow:hidden;font-size:22px;line-height:24.574px;color:#000000;font-weight:normal;text-align:center;white-space:pre;">Red / XL</div>
<div style="position:absolute;left:847.30px;top:463.89px;width:166.70px;height:24.57px;overflow:hidden;font-size:22px;line-height:24.574px;color:#000000;font-weight:normal;text-align:center;white-space:pre;">41</div>
<div style="position:absolute;left:1014.00px;top:463.89px;width:166.50px;height:24.57px;overflow:hidden;font-size:22px;line-height:24.574px;color:#000000;font-weight:normal;text-align:center;white-space:pre;">0.53</div>
<div style="position:absolute;left:1180.50px;top:463.89px;width:305.10px;height:24.57px;overflow:hidden;font-size:22px;line-height:24.574px;color:#000000;font-weight:normal;text-align:center;white-space:pre;">77</div>
<div style="position:absolute;left:511.5px;top:458.30px;width:165px;height:32px;overflow:hidden"><div style="position:absolute;left:0px;top:27.10px;width:4.59px;height:1.6px;background:#1155cc"></div><div style="position:absolute;left:2.59px;top:5.59px;font-size:22px;line-height:24.574px;color:#1155cc;text-decoration:underline;white-space:nowrap">96/8726/products/item-image.jpg</div></div>
<svg style="position:absolute;left:140.00px;top:457.30px" width="36" height="36" viewBox="0 0 36 36"><ellipse cx="19" cy="6.2" rx="2.7" ry="3.9" fill="#d6a584"/><path d="M16.3 5.5A2.7 3.4 0 0 1 21.7 5.5V3.8A2.7 2.2 0 0 0 16.3 3.8Z" fill="#c09060"/>
<path d="M15.3 11.5L13.3 25M22.7 11.5L28 19.5L23.7 24.8" fill="none" stroke="#8a3a8e" stroke-width="2.6" stroke-linejoin="round"/><path d="M14.3 10.8Q19 9.6 23.7 10.8L23 26.3H15Z" fill="#8a3a8e"/>
<path d="M14.6 26H23.4L23.8 32H14.2Z" fill="#d0dce8"/>
<path d="M15 32H18.3V34.8H15.3Z M19.7 32H23L22.7 34.8H19.7Z" fill="#d6a584"/></svg>
<div style="position:absolute;left:241.60px;top:498.39px;width:269.10px;height:24.57px;overflow:hidden;font-size:22px;line-height:24.574px;color:#000000;font-weight:normal;text-align:center;white-space:pre;">Chaz Kangeroo Hoodie</div>
<div style="position:absolute;left:677.10px;top:498.39px;width:166.20px;height:24.57px;overflow:hidden;font-size:22px;line-height:24.574px;color:#000000;font-weight:normal;text-align:center;white-space:pre;">Orange / M</div>
<div style="position:absolute;left:847.30px;top:498.39px;width:166.70px;height:24.57px;overflow:hidden;font-size:22px;line-height:24.574px;color:#000000;font-weight:normal;text-align:center;white-space:pre;">40</div>
<div style="position:absolute;left:1014.00px;top:498.39px;width:166.50px;height:24.57px;overflow:hidden;font-size:22px;line-height:24.574px;color:#000000;font-weight:normal;text-align:center;white-space:pre;">0.24</div>
<div style="position:absolute;left:1180.50px;top:498.39px;width:305.10px;height:24.57px;overflow:hidden;font-size:22px;line-height:24.574px;color:#000000;font-weight:normal;text-align:center;white-space:pre;">166</div>
<div style="position:absolute;left:511.5px;top:492.80px;width:165px;height:32px;overflow:hidden"><div style="position:absolute;left:-8.61px;top:5.59px;font-size:22px;line-height:24.574px;color:#1155cc;text-decoration:underline;white-space:nowrap">/196/8726/products/item-image.jpg</div></div>
<svg style="position:absolute;left:140.00px;top:491.80px" width="36" height="36" viewBox="0 0 36 36"><ellipse cx="19" cy="6.2" rx="2.7" ry="3.9" fill="#d6a584"/><path d="M16.3 5.5A2.7 3.4 0 0 1 21.7 5.5V3.8A2.7 2.2 0 0 0 16.3 3.8Z" fill="#4a3020"/>
<path d="M14.8 11.5L13 25.5M23.2 11.5L25 25.5" fill="none" stroke="#8a8a8a" stroke-width="2.6" stroke-linecap="round"/><path d="M14.3 10.8Q19 9.6 23.7 10.8L23 26.3H15Z" fill="#a8a8a8"/>
<path d="M14.6 26H23.4L23.8 32H14.2Z" fill="#202020"/>
<path d="M15 32H18.3V34.8H15.3Z M19.7 32H23L22.7 34.8H19.7Z" fill="#d6a584"/></svg>
<div style="position:absolute;left:241.60px;top:532.89px;width:269.10px;height:24.57px;overflow:hidden;font-size:22px;line-height:24.574px;color:#000000;font-weight:normal;text-align:center;white-space:pre;">Mona Pullover Hoodlie</div>
<div style="position:absolute;left:677.10px;top:532.89px;width:166.20px;height:24.57px;overflow:hidden;font-size:22px;line-height:24.574px;color:#000000;font-weight:normal;text-align:center;white-space:pre;">Purple / S</div>
<div style="position:absolute;left:847.30px;top:532.89px;width:166.70px;height:24.57px;overflow:hidden;font-size:22px;line-height:24.574px;color:#000000;font-weight:normal;text-align:center;white-space:pre;">39</div>
<div style="position:absolute;left:1014.00px;top:532.89px;width:166.50px;height:24.57px;overflow:hidden;font-size:22px;line-height:24.574px;color:#000000;font-weight:normal;text-align:center;white-space:pre;">0.19</div>
<div style="position:absolute;left:1180.50px;top:532.89px;width:305.10px;height:24.57px;overflow:hidden;font-size:22px;line-height:24.574px;color:#000000;font-weight:normal;text-align:center;white-space:pre;">205</div>
<div style="position:absolute;left:511.5px;top:527.30px;width:165px;height:32px;overflow:hidden"><div style="position:absolute;left:0.00px;top:9.70px;width:1.60px;height:15.8px;background:#1155cc"></div><div style="position:absolute;left:0px;top:27.10px;width:6.09px;height:1.6px;background:#1155cc"></div><div style="position:absolute;left:4.09px;top:5.59px;font-size:22px;line-height:24.574px;color:#1155cc;text-decoration:underline;white-space:nowrap">96/8726/products/item-image.jpg</div></div>
<svg style="position:absolute;left:140.00px;top:526.30px" width="36" height="36" viewBox="0 0 36 36"><ellipse cx="19" cy="6.2" rx="2.7" ry="3.9" fill="#d6a584"/><path d="M16.3 5.5A2.7 3.4 0 0 1 21.7 5.5V3.8A2.7 2.2 0 0 0 16.3 3.8Z" fill="#7a5030"/>
<path d="M14.8 11.5L13 25.5M23.2 11.5L25 25.5" fill="none" stroke="#15785c" stroke-width="2.6" stroke-linecap="round"/><path d="M14.3 10.8Q19 9.6 23.7 10.8L23 26.3H15Z" fill="#15785c"/>
<path d="M14.6 26H23.4L23.8 32H14.2Z" fill="#707070"/>
<path d="M15 32H18.3V34.8H15.3Z M19.7 32H23L22.7 34.8H19.7Z" fill="#d6a584"/></svg>
<div style="position:absolute;left:241.60px;top:567.39px;width:269.10px;height:24.57px;overflow:hidden;font-size:22px;line-height:24.574px;color:#000000;font-weight:normal;text-align:center;white-space:pre;">Diva Gym Tee</div>
<div style="position:absolute;left:677.10px;top:567.39px;width:166.20px;height:24.57px;overflow:hidden;font-size:22px;line-height:24.574px;color:#000000;font-weight:normal;text-align:center;white-space:pre;">Yellow / XL</div>
<div style="position:absolute;left:847.30px;top:567.39px;width:166.70px;height:24.57px;overflow:hidden;font-size:22px;line-height:24.574px;color:#000000;font-weight:normal;text-align:center;white-space:pre;">39</div>
<div style="position:absolute;left:1014.00px;top:567.39px;width:166.50px;height:24.57px;overflow:hidden;font-size:22px;line-height:24.574px;color:#000000;font-weight:normal;text-align:center;white-space:pre;">0.17</div>
<div style="position:absolute;left:1180.50px;top:567.39px;width:305.10px;height:24.57px;overflow:hidden;font-size:22px;line-height:24.574px;color:#000000;font-weight:normal;text-align:center;white-space:pre;">229</div>
<div style="position:absolute;left:511.5px;top:561.80px;width:165px;height:32px;overflow:hidden"><div style="position:absolute;left:0px;top:27.10px;width:5.19px;height:1.6px;background:#1155cc"></div><div style="position:absolute;left:3.19px;top:5.59px;font-size:22px;line-height:24.574px;color:#1155cc;text-decoration:underline;white-space:nowrap">96/8726/products/item-image.jpg</div></div>
<svg style="position:absolute;left:140.00px;top:560.80px" width="36" height="36" viewBox="0 0 36 36"><ellipse cx="19" cy="6.2" rx="2.7" ry="3.9" fill="#d6a584"/><path d="M16.3 5.5A2.7 3.4 0 0 1 21.7 5.5V3.8A2.7 2.2 0 0 0 16.3 3.8Z" fill="#5a3020"/>
<path d="M15.3 11.5L13.3 25M22.7 11.5L28 19.5L23.7 24.8" fill="none" stroke="#e8ec78" stroke-width="2.6" stroke-linejoin="round"/><path d="M14.3 10.8Q19 9.6 23.7 10.8L23 26.3H15Z" fill="#e8ec78"/>
<path d="M14.6 26H23.4L23.8 32H14.2Z" fill="#2050c0"/>
<path d="M15 32H18.3V34.8H15.3Z M19.7 32H23L22.7 34.8H19.7Z" fill="#d6a584"/></svg>
<div style="position:absolute;left:241.60px;top:601.89px;width:269.10px;height:24.57px;overflow:hidden;font-size:22px;line-height:24.574px;color:#000000;font-weight:normal;text-align:center;white-space:pre;">Aero Daily Fitness Tee</div>
<div style="position:absolute;left:677.10px;top:601.89px;width:166.20px;height:24.57px;overflow:hidden;font-size:22px;line-height:24.574px;color:#000000;font-weight:normal;text-align:center;white-space:pre;">Brown / M</div>
<div style="position:absolute;left:847.30px;top:601.89px;width:166.70px;height:24.57px;overflow:hidden;font-size:22px;line-height:24.574px;color:#000000;font-weight:normal;text-align:center;white-space:pre;">39</div>
<div style="position:absolute;left:1014.00px;top:601.89px;width:166.50px;height:24.57px;overflow:hidden;font-size:22px;line-height:24.574px;color:#000000;font-weight:normal;text-align:center;white-space:pre;">0.59</div>
<div style="position:absolute;left:1180.50px;top:601.89px;width:305.10px;height:24.57px;overflow:hidden;font-size:22px;line-height:24.574px;color:#000000;font-weight:normal;text-align:center;white-space:pre;">66</div>
<div style="position:absolute;left:511.5px;top:596.30px;width:165px;height:32px;overflow:hidden"><div style="position:absolute;left:-7.41px;top:5.59px;font-size:22px;line-height:24.574px;color:#1155cc;text-decoration:underline;white-space:nowrap">/196/8726/products/item-image.jpg</div></div>
<svg style="position:absolute;left:140.00px;top:595.30px" width="36" height="36" viewBox="0 0 36 36"><ellipse cx="19" cy="6.2" rx="2.7" ry="3.9" fill="#d6a584"/><path d="M16.3 5.5A2.7 3.4 0 0 1 21.7 5.5V3.8A2.7 2.2 0 0 0 16.3 3.8Z" fill="#3a2010"/>
<path d="M14.8 11.5L13 25.5M23.2 11.5L25 25.5" fill="none" stroke="#1e1e3a" stroke-width="2.6" stroke-linecap="round"/><path d="M14.3 10.8Q19 9.6 23.7 10.8L23 26.3H15Z" fill="#1e1e3a"/>
<path d="M14.6 26H23.4L23.8 32H14.2Z" fill="#a02828"/>
<path d="M15 32H18.3V34.8H15.3Z M19.7 32H23L22.7 34.8H19.7Z" fill="#d6a584"/></svg>
<div style="position:absolute;left:241.60px;top:636.39px;width:269.10px;height:24.57px;overflow:hidden;font-size:22px;line-height:24.574px;color:#000000;font-weight:normal;text-align:center;white-space:pre;">Iris Workout Top</div>
<div style="position:absolute;left:677.10px;top:636.39px;width:166.20px;height:24.57px;overflow:hidden;font-size:22px;line-height:24.574px;color:#000000;font-weight:normal;text-align:center;white-space:pre;">Red / S</div>
<div style="position:absolute;left:847.30px;top:636.39px;width:166.70px;height:24.57px;overflow:hidden;font-size:22px;line-height:24.574px;color:#000000;font-weight:normal;text-align:center;white-space:pre;">39</div>
<div style="position:absolute;left:1014.00px;top:636.39px;width:166.50px;height:24.57px;overflow:hidden;font-size:22px;line-height:24.574px;color:#000000;font-weight:normal;text-align:center;white-space:pre;">0.27</div>
<div style="position:absolute;left:1180.50px;top:636.39px;width:305.10px;height:24.57px;overflow:hidden;font-size:22px;line-height:24.574px;color:#000000;font-weight:normal;text-align:center;white-space:pre;">144</div>
<div style="position:absolute;left:511.5px;top:630.80px;width:165px;height:32px;overflow:hidden"><div style="position:absolute;left:-1.51px;top:5.59px;font-size:22px;line-height:24.574px;color:#1155cc;text-decoration:underline;white-space:nowrap">/196/8726/products/item-image.jpg</div></div>
<svg style="position:absolute;left:140.00px;top:629.80px" width="36" height="36" viewBox="0 0 36 36"><ellipse cx="19" cy="6.2" rx="2.7" ry="3.9" fill="#d6a584"/><path d="M16.3 5.5A2.7 3.4 0 0 1 21.7 5.5V3.8A2.7 2.2 0 0 0 16.3 3.8Z" fill="#5a3020"/>
<path d="M14.8 11.5L13 25.5M23.2 11.5L25 25.5" fill="none" stroke="#b02a30" stroke-width="2.6" stroke-linecap="round"/><path d="M14.3 10.8Q19 9.6 23.7 10.8L23 26.3H15Z" fill="#b02a30"/>
<path d="M14.6 26H23.4L23.8 32H14.2Z" fill="#808080"/>
<path d="M15 32H18.3V34.8H15.3Z M19.7 32H23L22.7 34.8H19.7Z" fill="#d6a584"/></svg>
<div style="position:absolute;left:241.60px;top:670.89px;width:269.10px;height:24.57px;overflow:hidden;font-size:22px;line-height:24.574px;color:#000000;font-weight:normal;text-align:center;white-space:pre;">Rocco Gym Tank</div>
<div style="position:absolute;left:677.10px;top:670.89px;width:166.20px;height:24.57px;overflow:hidden;font-size:22px;line-height:24.574px;color:#000000;font-weight:normal;text-align:center;white-space:pre;">Blue / XS</div>
<div style="position:absolute;left:847.30px;top:670.89px;width:166.70px;height:24.57px;overflow:hidden;font-size:22px;line-height:24.574px;color:#000000;font-weight:normal;text-align:center;white-space:pre;">39</div>
<div style="position:absolute;left:1014.00px;top:670.89px;width:166.50px;height:24.57px;overflow:hidden;font-size:22px;line-height:24.574px;color:#000000;font-weight:normal;text-align:center;white-space:pre;">0.14</div>
<div style="position:absolute;left:1180.50px;top:670.89px;width:305.10px;height:24.57px;overflow:hidden;font-size:22px;line-height:24.574px;color:#000000;font-weight:normal;text-align:center;white-space:pre;">278</div>
<div style="position:absolute;left:511.5px;top:665.30px;width:165px;height:32px;overflow:hidden"><div style="position:absolute;left:-5.11px;top:5.59px;font-size:22px;line-height:24.574px;color:#1155cc;text-decoration:underline;white-space:nowrap">/196/8726/products/item-image.jpg</div></div>
<svg style="position:absolute;left:140.00px;top:664.30px" width="36" height="36" viewBox="0 0 36 36"><ellipse cx="19" cy="6.2" rx="2.7" ry="3.9" fill="#d6a584"/><path d="M16.3 5.5A2.7 3.4 0 0 1 21.7 5.5V3.8A2.7 2.2 0 0 0 16.3 3.8Z" fill="#3a2818"/>
<path d="M14.8 11.5L13 25.5M23.2 11.5L25 25.5" fill="none" stroke="#c89878" stroke-width="2.6" stroke-linecap="round"/><path d="M14.3 10.8Q19 9.6 23.7 10.8L23 26.3H15Z" fill="#a8c8e8"/>
<path d="M14.6 26H23.4L23.8 32H14.2Z" fill="#303a48"/>
<path d="M15 32H18.3V34.8H15.3Z M19.7 32H23L22.7 34.8H19.7Z" fill="#d6a584"/></svg>
<div style="position:absolute;left:241.60px;top:705.39px;width:269.10px;height:24.57px;overflow:hidden;font-size:22px;line-height:24.574px;color:#000000;font-weight:normal;text-align:center;white-space:pre;">Helios EverCool&amp;trade; Tee</div>
<div style="position:absolute;left:677.10px;top:705.39px;width:166.20px;height:24.57px;overflow:hidden;font-size:22px;line-height:24.574px;color:#000000;font-weight:normal;text-align:center;white-space:pre;">Purple / L</div>
<div style="position:absolute;left:847.30px;top:705.39px;width:166.70px;height:24.57px;overflow:hidden;font-size:22px;line-height:24.574px;color:#000000;font-weight:normal;text-align:center;white-space:pre;">39</div>
<div style="position:absolute;left:1014.00px;top:705.39px;width:166.50px;height:24.57px;overflow:hidden;font-size:22px;line-height:24.574px;color:#000000;font-weight:normal;text-align:center;white-space:pre;">0.18</div>
<div style="position:absolute;left:1180.50px;top:705.39px;width:305.10px;height:24.57px;overflow:hidden;font-size:22px;line-height:24.574px;color:#000000;font-weight:normal;text-align:center;white-space:pre;">216</div>
<div style="position:absolute;left:511.5px;top:699.80px;width:165px;height:32px;overflow:hidden"><div style="position:absolute;left:-7.41px;top:5.59px;font-size:22px;line-height:24.574px;color:#1155cc;text-decoration:underline;white-space:nowrap">/196/8726/products/item-image.jpg</div></div>
<svg style="position:absolute;left:140.00px;top:698.80px" width="36" height="36" viewBox="0 0 36 36"><ellipse cx="19" cy="6.2" rx="2.7" ry="3.9" fill="#d6a584"/><path d="M16.3 5.5A2.7 3.4 0 0 1 21.7 5.5V3.8A2.7 2.2 0 0 0 16.3 3.8Z" fill="#3a2818"/>
<path d="M14.8 11.5L13 25.5M23.2 11.5L25 25.5" fill="none" stroke="#2aa08e" stroke-width="2.6" stroke-linecap="round"/><path d="M14.3 10.8Q19 9.6 23.7 10.8L23 26.3H15Z" fill="#2aa08e"/>
<path d="M14.6 26H23.4L23.8 32H14.2Z" fill="#909090"/>
<path d="M15 32H18.3V34.8H15.3Z M19.7 32H23L22.7 34.8H19.7Z" fill="#d6a584"/></svg>
<div style="position:absolute;left:241.60px;top:739.89px;width:269.10px;height:24.57px;overflow:hidden;font-size:22px;line-height:24.574px;color:#000000;font-weight:normal;text-align:center;white-space:pre;">Frankie  Sweatshirt</div>
<div style="position:absolute;left:677.10px;top:739.89px;width:166.20px;height:24.57px;overflow:hidden;font-size:22px;line-height:24.574px;color:#000000;font-weight:normal;text-align:center;white-space:pre;">Yellow / XL</div>
<div style="position:absolute;left:847.30px;top:739.89px;width:166.70px;height:24.57px;overflow:hidden;font-size:22px;line-height:24.574px;color:#000000;font-weight:normal;text-align:center;white-space:pre;">38</div>
<div style="position:absolute;left:1014.00px;top:739.89px;width:166.50px;height:24.57px;overflow:hidden;font-size:22px;line-height:24.574px;color:#000000;font-weight:normal;text-align:center;white-space:pre;">0.19</div>
<div style="position:absolute;left:1180.50px;top:739.89px;width:305.10px;height:24.57px;overflow:hidden;font-size:22px;line-height:24.574px;color:#000000;font-weight:normal;text-align:center;white-space:pre;">200</div>
<div style="position:absolute;left:511.5px;top:734.30px;width:165px;height:32px;overflow:hidden"><div style="position:absolute;left:0px;top:27.10px;width:4.89px;height:1.6px;background:#1155cc"></div><div style="position:absolute;left:2.89px;top:5.59px;font-size:22px;line-height:24.574px;color:#1155cc;text-decoration:underline;white-space:nowrap">96/8726/products/item-image.jpg</div></div>
<svg style="position:absolute;left:140.00px;top:733.30px" width="36" height="36" viewBox="0 0 36 36"><ellipse cx="19" cy="6.2" rx="2.7" ry="3.9" fill="#d6a584"/><path d="M16.3 5.5A2.7 3.4 0 0 1 21.7 5.5V3.8A2.7 2.2 0 0 0 16.3 3.8Z" fill="#3a2818"/>
<path d="M14.8 11.5L13 25.5M23.2 11.5L25 25.5" fill="none" stroke="#a8e6cc" stroke-width="2.6" stroke-linecap="round"/><path d="M14.3 10.8Q19 9.6 23.7 10.8L23 26.3H15Z" fill="#a8e6cc"/>
<path d="M14.6 26H23.4L23.8 32H14.2Z" fill="#c8b898"/>
<path d="M15 32H18.3V34.8H15.3Z M19.7 32H23L22.7 34.8H19.7Z" fill="#d6a584"/></svg>
<div style="position:absolute;left:241.60px;top:774.39px;width:269.10px;height:24.57px;overflow:hidden;font-size:22px;line-height:24.574px;color:#000000;font-weight:normal;text-align:center;white-space:pre;">Beaumont Summit Kit</div>
<div style="position:absolute;left:677.10px;top:774.39px;width:166.20px;height:24.57px;overflow:hidden;font-size:22px;line-height:24.574px;color:#000000;font-weight:normal;text-align:center;white-space:pre;">Red / XS</div>
<div style="position:absolute;left:847.30px;top:774.39px;width:166.70px;height:24.57px;overflow:hidden;font-size:22px;line-height:24.574px;color:#000000;font-weight:normal;text-align:center;white-space:pre;">38</div>
<div style="position:absolute;left:1014.00px;top:774.39px;width:166.50px;height:24.57px;overflow:hidden;font-size:22px;line-height:24.574px;color:#000000;font-weight:normal;text-align:center;white-space:pre;">0.27</div>
<div style="position:absolute;left:1180.50px;top:774.39px;width:305.10px;height:24.57px;overflow:hidden;font-size:22px;line-height:24.574px;color:#000000;font-weight:normal;text-align:center;white-space:pre;">140</div>
<div style="position:absolute;left:511.5px;top:768.80px;width:165px;height:32px;overflow:hidden"><div style="position:absolute;left:0.10px;top:9.70px;width:2.20px;height:15.8px;background:#1155cc"></div><div style="position:absolute;left:0px;top:27.10px;width:6.79px;height:1.6px;background:#1155cc"></div><div style="position:absolute;left:4.79px;top:5.59px;font-size:22px;line-height:24.574px;color:#1155cc;text-decoration:underline;white-space:nowrap">96/8726/products/item-image.jpg</div></div>
<svg style="position:absolute;left:140.00px;top:767.80px" width="36" height="36" viewBox="0 0 36 36"><ellipse cx="19" cy="6.2" rx="2.7" ry="3.9" fill="#d6a584"/><path d="M16.3 5.5A2.7 3.4 0 0 1 21.7 5.5V3.8A2.7 2.2 0 0 0 16.3 3.8Z" fill="#3a2818"/>
<path d="M14.8 11.5L13 25.5M23.2 11.5L25 25.5" fill="none" stroke="#d6f070" stroke-width="2.6" stroke-linecap="round"/><path d="M14.3 10.8Q19 9.6 23.7 10.8L23 26.3H15Z" fill="#d6f070"/>
<path d="M14.6 26H23.4L23.8 32H14.2Z" fill="#202020"/>
<path d="M15 32H18.3V34.8H15.3Z M19.7 32H23L22.7 34.8H19.7Z" fill="#d6a584"/></svg>
<div style="position:absolute;left:241.60px;top:808.89px;width:269.10px;height:24.57px;overflow:hidden;font-size:22px;line-height:24.574px;color:#000000;font-weight:normal;text-align:center;white-space:pre;">Juno Jacket</div>
<div style="position:absolute;left:677.10px;top:808.89px;width:166.20px;height:24.57px;overflow:hidden;font-size:22px;line-height:24.574px;color:#000000;font-weight:normal;text-align:center;white-space:pre;">Blue / M</div>
<div style="position:absolute;left:847.30px;top:808.89px;width:166.70px;height:24.57px;overflow:hidden;font-size:22px;line-height:24.574px;color:#000000;font-weight:normal;text-align:center;white-space:pre;">38</div>
<div style="position:absolute;left:1014.00px;top:808.89px;width:166.50px;height:24.57px;overflow:hidden;font-size:22px;line-height:24.574px;color:#000000;font-weight:normal;text-align:center;white-space:pre;">0.34</div>
<div style="position:absolute;left:1180.50px;top:808.89px;width:305.10px;height:24.57px;overflow:hidden;font-size:22px;line-height:24.574px;color:#000000;font-weight:normal;text-align:center;white-space:pre;">111</div>
<div style="position:absolute;left:511.5px;top:803.30px;width:165px;height:32px;overflow:hidden"><div style="position:absolute;left:0.30px;top:9.70px;width:2.20px;height:15.8px;background:#1155cc"></div><div style="position:absolute;left:0px;top:27.10px;width:6.99px;height:1.6px;background:#1155cc"></div><div style="position:absolute;left:4.99px;top:5.59px;font-size:22px;line-height:24.574px;color:#1155cc;text-decoration:underline;white-space:nowrap">96/8726/products/item-image.jpg</div></div>
<svg style="position:absolute;left:140.00px;top:802.30px" width="36" height="36" viewBox="0 0 36 36"><ellipse cx="19" cy="6.2" rx="2.7" ry="3.9" fill="#d6a584"/><path d="M16.3 5.5A2.7 3.4 0 0 1 21.7 5.5V3.8A2.7 2.2 0 0 0 16.3 3.8Z" fill="#8a6040"/>
<path d="M14.8 11.5L13 25.5M23.2 11.5L25 25.5" fill="none" stroke="#5a3aa6" stroke-width="2.6" stroke-linecap="round"/><path d="M14.3 10.8Q19 9.6 23.7 10.8L23 26.3H15Z" fill="#5a3aa6"/>
<path d="M14.6 26H23.4L23.8 32H14.2Z" fill="#404040"/>
<path d="M15 32H18.3V34.8H15.3Z M19.7 32H23L22.7 34.8H19.7Z" fill="#d6a584"/></svg>
<div style="position:absolute;left:241.60px;top:843.39px;width:269.10px;height:24.57px;overflow:hidden;font-size:22px;line-height:24.574px;color:#000000;font-weight:normal;text-align:center;white-space:pre;">Mach Street Sweatshirt</div>
<div style="position:absolute;left:677.10px;top:843.39px;width:166.20px;height:24.57px;overflow:hidden;font-size:22px;line-height:24.574px;color:#000000;font-weight:normal;text-align:center;white-space:pre;">Blue / L</div>
<div style="position:absolute;left:847.30px;top:843.39px;width:166.70px;height:24.57px;overflow:hidden;font-size:22px;line-height:24.574px;color:#000000;font-weight:normal;text-align:center;white-space:pre;">38</div>
<div style="position:absolute;left:1014.00px;top:843.39px;width:166.50px;height:24.57px;overflow:hidden;font-size:22px;line-height:24.574px;color:#000000;font-weight:normal;text-align:center;white-space:pre;">0.21</div>
<div style="position:absolute;left:1180.50px;top:843.39px;width:305.10px;height:24.57px;overflow:hidden;font-size:22px;line-height:24.574px;color:#000000;font-weight:normal;text-align:center;white-space:pre;">180</div>
<div style="position:absolute;left:511.5px;top:837.80px;width:165px;height:32px;overflow:hidden"><div style="position:absolute;left:-8.11px;top:5.59px;font-size:22px;line-height:24.574px;color:#1155cc;text-decoration:underline;white-space:nowrap">/196/8726/products/item-image.jpg</div></div>
<svg style="position:absolute;left:140.00px;top:836.80px" width="36" height="36" viewBox="0 0 36 36"><ellipse cx="19" cy="6.2" rx="2.7" ry="3.9" fill="#d6a584"/><path d="M16.3 5.5A2.7 3.4 0 0 1 21.7 5.5V3.8A2.7 2.2 0 0 0 16.3 3.8Z" fill="#3a2818"/>
<path d="M14.8 11.5L13 25.5M23.2 11.5L25 25.5" fill="none" stroke="#1a3ca0" stroke-width="2.6" stroke-linecap="round"/><path d="M14.3 10.8Q19 9.6 23.7 10.8L23 26.3H15Z" fill="#1a3ca0"/>
<path d="M14.6 26H23.4L23.8 32H14.2Z" fill="#808080"/>
<path d="M15 32H18.3V34.8H15.3Z M19.7 32H23L22.7 34.8H19.7Z" fill="#d6a584"/></svg>
<div style="position:absolute;left:241.60px;top:877.89px;width:269.10px;height:24.57px;overflow:hidden;font-size:22px;line-height:24.574px;color:#000000;font-weight:normal;text-align:center;white-space:pre;">Desiree Fitness Tee</div>
<div style="position:absolute;left:677.10px;top:877.89px;width:166.20px;height:24.57px;overflow:hidden;font-size:22px;line-height:24.574px;color:#000000;font-weight:normal;text-align:center;white-space:pre;">Yellow / XS</div>
<div style="position:absolute;left:847.30px;top:877.89px;width:166.70px;height:24.57px;overflow:hidden;font-size:22px;line-height:24.574px;color:#000000;font-weight:normal;text-align:center;white-space:pre;">38</div>
<div style="position:absolute;left:1014.00px;top:877.89px;width:166.50px;height:24.57px;overflow:hidden;font-size:22px;line-height:24.574px;color:#000000;font-weight:normal;text-align:center;white-space:pre;">0.19</div>
<div style="position:absolute;left:1180.50px;top:877.89px;width:305.10px;height:24.57px;overflow:hidden;font-size:22px;line-height:24.574px;color:#000000;font-weight:normal;text-align:center;white-space:pre;">200</div>
<div style="position:absolute;left:511.5px;top:872.30px;width:165px;height:32px;overflow:hidden"><div style="position:absolute;left:-8.71px;top:5.59px;font-size:22px;line-height:24.574px;color:#1155cc;text-decoration:underline;white-space:nowrap">/196/8726/products/item-image.jpg</div></div>
<svg style="position:absolute;left:140.00px;top:871.30px" width="36" height="36" viewBox="0 0 36 36"><ellipse cx="19" cy="6.2" rx="2.7" ry="3.9" fill="#d6a584"/><path d="M16.3 5.5A2.7 3.4 0 0 1 21.7 5.5V3.8A2.7 2.2 0 0 0 16.3 3.8Z" fill="#4a2818"/>
<path d="M15.3 11.5L13.3 25M22.7 11.5L28 19.5L23.7 24.8" fill="none" stroke="#1a1a1a" stroke-width="2.6" stroke-linejoin="round"/><path d="M14.3 10.8Q19 9.6 23.7 10.8L23 26.3H15Z" fill="#1a1a1a"/>
<path d="M14.6 26H23.4L23.8 32H14.2Z" fill="#60c0b0"/>
<path d="M15 32H18.3V34.8H15.3Z M19.7 32H23L22.7 34.8H19.7Z" fill="#d6a584"/></svg>
<div style="position:absolute;left:241.60px;top:912.39px;width:269.10px;height:24.57px;overflow:hidden;font-size:22px;line-height:24.574px;color:#000000;font-weight:normal;text-align:center;white-space:pre;">Juno Jacket</div>
<div style="position:absolute;left:677.10px;top:912.39px;width:166.20px;height:24.57px;overflow:hidden;font-size:22px;line-height:24.574px;color:#000000;font-weight:normal;text-align:center;white-space:pre;">Purple / M</div>
<div style="position:absolute;left:847.30px;top:912.39px;width:166.70px;height:24.57px;overflow:hidden;font-size:22px;line-height:24.574px;color:#000000;font-weight:normal;text-align:center;white-space:pre;">38</div>
<div style="position:absolute;left:1014.00px;top:912.39px;width:166.50px;height:24.57px;overflow:hidden;font-size:22px;line-height:24.574px;color:#000000;font-weight:normal;text-align:center;white-space:pre;">0.12</div>
<div style="position:absolute;left:1180.50px;top:912.39px;width:305.10px;height:24.57px;overflow:hidden;font-size:22px;line-height:24.574px;color:#000000;font-weight:normal;text-align:center;white-space:pre;">316</div>
<div style="position:absolute;left:511.5px;top:906.80px;width:165px;height:32px;overflow:hidden"><div style="position:absolute;left:1.10px;top:9.70px;width:2.20px;height:15.8px;background:#1155cc"></div><div style="position:absolute;left:0px;top:27.10px;width:7.79px;height:1.6px;background:#1155cc"></div><div style="position:absolute;left:5.79px;top:5.59px;font-size:22px;line-height:24.574px;color:#1155cc;text-decoration:underline;white-space:nowrap">96/8726/products/item-image.jpg</div></div>
<svg style="position:absolute;left:140.00px;top:905.80px" width="36" height="36" viewBox="0 0 36 36"><ellipse cx="19" cy="6.2" rx="2.7" ry="3.9" fill="#d6a584"/><path d="M16.3 5.5A2.7 3.4 0 0 1 21.7 5.5V3.8A2.7 2.2 0 0 0 16.3 3.8Z" fill="#8a6040"/>
<path d="M14.8 11.5L13 25.5M23.2 11.5L25 25.5" fill="none" stroke="#5a3aa6" stroke-width="2.6" stroke-linecap="round"/><path d="M14.3 10.8Q19 9.6 23.7 10.8L23 26.3H15Z" fill="#5a3aa6"/>
<path d="M14.6 26H23.4L23.8 32H14.2Z" fill="#404040"/>
<path d="M15 32H18.3V34.8H15.3Z M19.7 32H23L22.7 34.8H19.7Z" fill="#d6a584"/></svg>
<div style="position:absolute;left:241.60px;top:946.89px;width:269.10px;height:24.57px;overflow:hidden;font-size:22px;line-height:24.574px;color:#000000;font-weight:normal;text-align:center;white-space:pre;">Ariel Roll Sleeve Sweatshirt</div>
<div style="position:absolute;left:677.10px;top:946.89px;width:166.20px;height:24.57px;overflow:hidden;font-size:22px;line-height:24.574px;color:#000000;font-weight:normal;text-align:center;white-space:pre;">Purple / L</div>
<div style="position:absolute;left:847.30px;top:946.89px;width:166.70px;height:24.57px;overflow:hidden;font-size:22px;line-height:24.574px;color:#000000;font-weight:normal;text-align:center;white-space:pre;">38</div>
<div style="position:absolute;left:1014.00px;top:946.89px;width:166.50px;height:24.57px;overflow:hidden;font-size:22px;line-height:24.574px;color:#000000;font-weight:normal;text-align:center;white-space:pre;">0.26</div>
<div style="position:absolute;left:1180.50px;top:946.89px;width:305.10px;height:24.57px;overflow:hidden;font-size:22px;line-height:24.574px;color:#000000;font-weight:normal;text-align:center;white-space:pre;">146</div>
<div style="position:absolute;left:511.5px;top:941.30px;width:165px;height:32px;overflow:hidden"><div style="position:absolute;left:0px;top:27.10px;width:3.79px;height:1.6px;background:#1155cc"></div><div style="position:absolute;left:1.79px;top:5.59px;font-size:22px;line-height:24.574px;color:#1155cc;text-decoration:underline;white-space:nowrap">96/8726/products/item-image.jpg</div></div>
<svg style="position:absolute;left:140.00px;top:940.30px" width="36" height="36" viewBox="0 0 36 36"><ellipse cx="19" cy="6.2" rx="2.7" ry="3.9" fill="#d6a584"/><path d="M16.3 5.5A2.7 3.4 0 0 1 21.7 5.5V3.8A2.7 2.2 0 0 0 16.3 3.8Z" fill="#b08050"/>
<path d="M15.3 11.5L13.3 25M22.7 11.5L28 19.5L23.7 24.8" fill="none" stroke="#4e30a8" stroke-width="2.6" stroke-linejoin="round"/><path d="M14.3 10.8Q19 9.6 23.7 10.8L23 26.3H15Z" fill="#a996f2"/>
<path d="M14.6 26H23.4L23.8 32H14.2Z" fill="#505050"/>
<path d="M15 32H18.3V34.8H15.3Z M19.7 32H23L22.7 34.8H19.7Z" fill="#d6a584"/></svg>
<div style="position:absolute;left:241.60px;top:981.39px;width:269.10px;height:24.57px;overflow:hidden;font-size:22px;line-height:24.574px;color:#000000;font-weight:normal;text-align:center;white-space:pre;">Hera Pullover Hoodie</div>
<div style="position:absolute;left:677.10px;top:981.39px;width:166.20px;height:24.57px;overflow:hidden;font-size:22px;line-height:24.574px;color:#000000;font-weight:normal;text-align:center;white-space:pre;">Blue / M</div>
<div style="position:absolute;left:847.30px;top:981.39px;width:166.70px;height:24.57px;overflow:hidden;font-size:22px;line-height:24.574px;color:#000000;font-weight:normal;text-align:center;white-space:pre;">37</div>
<div style="position:absolute;left:1014.00px;top:981.39px;width:166.50px;height:24.57px;overflow:hidden;font-size:22px;line-height:24.574px;color:#000000;font-weight:normal;text-align:center;white-space:pre;">0.27</div>
<div style="position:absolute;left:1180.50px;top:981.39px;width:305.10px;height:24.57px;overflow:hidden;font-size:22px;line-height:24.574px;color:#000000;font-weight:normal;text-align:center;white-space:pre;">137</div>
<div style="position:absolute;left:511.5px;top:975.80px;width:165px;height:32px;overflow:hidden"><div style="position:absolute;left:-6.91px;top:5.59px;font-size:22px;line-height:24.574px;color:#1155cc;text-decoration:underline;white-space:nowrap">/196/8726/products/item-image.jpg</div></div>
<svg style="position:absolute;left:140.00px;top:974.80px" width="36" height="36" viewBox="0 0 36 36"><ellipse cx="19" cy="6.2" rx="2.7" ry="3.9" fill="#d6a584"/><path d="M16.3 5.5A2.7 3.4 0 0 1 21.7 5.5V3.8A2.7 2.2 0 0 0 16.3 3.8Z" fill="#8a5a3a"/>
<path d="M15.3 11.5L10 19.5L14.3 24.8M22.7 11.5L28 19.5L23.7 24.8" fill="none" stroke="#3ab5b3" stroke-width="2.6" stroke-linejoin="round"/><path d="M14.3 10.8Q19 9.6 23.7 10.8L23 26.3H15Z" fill="#3ab5b3"/>
<path d="M14.6 26H23.4L23.8 32H14.2Z" fill="#3ab5b3"/>
<path d="M15 32H18.3V34.8H15.3Z M19.7 32H23L22.7 34.8H19.7Z" fill="#d6a584"/></svg>
<div style="position:absolute;left:241.60px;top:1015.89px;width:269.10px;height:24.57px;overflow:hidden;font-size:22px;line-height:24.574px;color:#000000;font-weight:normal;text-align:center;white-space:pre;">Layla Tee</div>
<div style="position:absolute;left:677.10px;top:1015.89px;width:166.20px;height:24.57px;overflow:hidden;font-size:22px;line-height:24.574px;color:#000000;font-weight:normal;text-align:center;white-space:pre;">Red / L</div>
<div style="position:absolute;left:847.30px;top:1015.89px;width:166.70px;height:24.57px;overflow:hidden;font-size:22px;line-height:24.574px;color:#000000;font-weight:normal;text-align:center;white-space:pre;">37</div>
<div style="position:absolute;left:1014.00px;top:1015.89px;width:166.50px;height:24.57px;overflow:hidden;font-size:22px;line-height:24.574px;color:#000000;font-weight:normal;text-align:center;white-space:pre;">0.17</div>
<div style="position:absolute;left:1180.50px;top:1015.89px;width:305.10px;height:24.57px;overflow:hidden;font-size:22px;line-height:24.574px;color:#000000;font-weight:normal;text-align:center;white-space:pre;">217</div>
<div style="position:absolute;left:511.5px;top:1010.30px;width:165px;height:32px;overflow:hidden"><div style="position:absolute;left:0.20px;top:9.70px;width:2.20px;height:15.8px;background:#1155cc"></div><div style="position:absolute;left:0px;top:27.10px;width:6.89px;height:1.6px;background:#1155cc"></div><div style="position:absolute;left:4.89px;top:5.59px;font-size:22px;line-height:24.574px;color:#1155cc;text-decoration:underline;white-space:nowrap">96/8726/products/item-image.jpg</div></div>
<svg style="position:absolute;left:140.00px;top:1009.30px" width="36" height="36" viewBox="0 0 36 36"><ellipse cx="19" cy="6.2" rx="2.7" ry="3.9" fill="#d6a584"/><path d="M16.3 5.5A2.7 3.4 0 0 1 21.7 5.5V3.8A2.7 2.2 0 0 0 16.3 3.8Z" fill="#8a5a3a"/>
<path d="M15.3 11.5L10 19.5L14.3 24.8M22.7 11.5L28 19.5L23.7 24.8" fill="none" stroke="#178a62" stroke-width="2.6" stroke-linejoin="round"/><path d="M14.3 10.8Q19 9.6 23.7 10.8L23 26.3H15Z" fill="#178a62"/>
<path d="M14.6 26H23.4L23.8 32H14.2Z" fill="#303030"/>
<path d="M15 32H18.3V34.8H15.3Z M19.7 32H23L22.7 34.8H19.7Z" fill="#d6a584"/></svg>
<div style="position:absolute;left:241.60px;top:1050.39px;width:269.10px;height:24.57px;overflow:hidden;font-size:22px;line-height:24.574px;color:#000000;font-weight:normal;text-align:center;white-space:pre;">Bella Tank</div>
<div style="position:absolute;left:677.10px;top:1050.39px;width:166.20px;height:24.57px;overflow:hidden;font-size:22px;line-height:24.574px;color:#000000;font-weight:normal;text-align:center;white-space:pre;">Orange / L</div>
<div style="position:absolute;left:847.30px;top:1050.39px;width:166.70px;height:24.57px;overflow:hidden;font-size:22px;line-height:24.574px;color:#000000;font-weight:normal;text-align:center;white-space:pre;">37</div>
<div style="position:absolute;left:1014.00px;top:1050.39px;width:166.50px;height:24.57px;overflow:hidden;font-size:22px;line-height:24.574px;color:#000000;font-weight:normal;text-align:center;white-space:pre;">0.13</div>
<div style="position:absolute;left:1180.50px;top:1050.39px;width:305.10px;height:24.57px;overflow:hidden;font-size:22px;line-height:24.574px;color:#000000;font-weight:normal;text-align:center;white-space:pre;">284</div>
<div style="position:absolute;left:511.5px;top:1044.80px;width:165px;height:32px;overflow:hidden"><div style="position:absolute;left:-1.81px;top:5.59px;font-size:22px;line-height:24.574px;color:#1155cc;text-decoration:underline;white-space:nowrap">/196/8726/products/item-image.jpg</div></div>
<svg style="position:absolute;left:140.00px;top:1043.80px" width="36" height="36" viewBox="0 0 36 36"><ellipse cx="19" cy="6.2" rx="2.7" ry="3.9" fill="#d6a584"/><path d="M16.3 5.5A2.7 3.4 0 0 1 21.7 5.5V3.8A2.7 2.2 0 0 0 16.3 3.8Z" fill="#b08050"/>
<path d="M14.8 11.5L13 25.5M23.2 11.5L25 25.5" fill="none" stroke="#c89878" stroke-width="2.6" stroke-linecap="round"/><path d="M14.3 10.8Q19 9.6 23.7 10.8L23 26.3H15Z" fill="#2034e0"/>
<path d="M14.6 26H23.4L23.8 32H14.2Z" fill="#909090"/>
<path d="M15 32H18.3V34.8H15.3Z M19.7 32H23L22.7 34.8H19.7Z" fill="#d6a584"/></svg>
<svg style="position:absolute;left:140.00px;top:1078.30px" width="36" height="8" viewBox="0 0 36 8"><ellipse cx="19" cy="6.2" rx="2.7" ry="3.9" fill="#d6a584"/></svg>
<div style="position:absolute;left:843.20px;top:233.00px;width:7.70px;height:853.00px;background:#c7c7c7;"></div>
<div style="position:absolute;left:843.20px;top:274.00px;width:1.20px;height:80.50px;background:#351c75;"></div>
<div style="position:absolute;left:2141.30px;top:233.00px;width:18.70px;height:853.00px;background:#ffffff;"></div>
<div style="position:absolute;left:2140.50px;top:233.80px;width:19.50px;height:39.00px;background:#f8f8f8;"></div>
<div style="position:absolute;left:2140.20px;top:233.00px;width:1.20px;height:853.00px;background:#e1e1e1;"></div>
<div style="position:absolute;left:2142.90px;top:275.30px;width:14.90px;height:42.40px;background:#dadce0;border-radius:7.5px;"></div>
<div style="position:absolute;left:2141.30px;top:1033.70px;width:18.70px;height:52.00px;background:#f8f8f8;"></div>
<div style="position:absolute;left:2141.30px;top:1033.20px;width:18.70px;height:1.20px;background:#e1e1e1;"></div>
<div style="position:absolute;left:2141.30px;top:1058.90px;width:18.70px;height:1.20px;background:#e1e1e1;"></div>
<svg style="position:absolute;left:2145.50px;top:1041.50px" width="9.5" height="6" viewBox="0 0 9.5 6"><path d="M0 5.5H9.5L4.75 0Z" fill="#8c8c8c"/></svg>
<svg style="position:absolute;left:2145.50px;top:1067.50px" width="9.5" height="6" viewBox="0 0 9.5 6"><path d="M0 0H9.5L4.75 5.5Z" fill="#8c8c8c"/></svg>
<div style="position:absolute;left:0.00px;top:1085.80px;width:2160.00px;height:21.50px;background:#ffffff;"></div>
<div style="position:absolute;left:0.00px;top:1085.80px;width:843.20px;height:21.50px;background:#f8f8f8;"></div>
<div style="position:absolute;left:0.00px;top:1085.00px;width:2160.00px;height:1.60px;background:#e1e1e1;"></div>
<div style="position:absolute;left:843.20px;top:1085.80px;width:8.00px;height:21.50px;background:#dde3ea;"></div>
<div style="position:absolute;left:855.00px;top:1088.00px;width:416.00px;height:15.00px;background:#dadce0;border-radius:7.5px;"></div>
<div style="position:absolute;left:2089.50px;top:1086.60px;width:51.80px;height:18.00px;background:#f8f8f8;"></div>
<div style="position:absolute;left:2088.90px;top:1086.00px;width:1.20px;height:19.00px;background:#e1e1e1;"></div>
<div style="position:absolute;left:2115.00px;top:1086.00px;width:1.20px;height:19.00px;background:#e1e1e1;"></div>
<div style="position:absolute;left:2141.30px;top:1086.60px;width:18.70px;height:18.00px;background:#f8f8f8;"></div>
<div style="position:absolute;left:2140.50px;top:1086.00px;width:1.40px;height:19.00px;background:#e1e1e1;"></div>
<svg style="position:absolute;left:2098.50px;top:1092.00px" width="6" height="9.5" viewBox="0 0 6 9.5"><path d="M5.5 0V9.5L0 4.75Z" fill="#8c8c8c"/></svg>
<svg style="position:absolute;left:2125.50px;top:1092.00px" width="6" height="9.5" viewBox="0 0 6 9.5"><path d="M0 0V9.5L5.5 4.75Z" fill="#8c8c8c"/></svg>
<div style="position:absolute;left:0.00px;top:1106.60px;width:2160.00px;height:1.40px;background:#e1e1e1;"></div>
<div style="position:absolute;left:0.00px;top:1108.00px;width:2160.00px;height:61.00px;background:#f9fbfd;"></div>
<div style="position:absolute;left:92.40px;top:1137.60px;width:17.80px;height:2.80px;background:#444746;"></div>
<div style="position:absolute;left:99.90px;top:1130.20px;width:2.80px;height:17.40px;background:#444746;"></div>
<div style="position:absolute;left:155.00px;top:1130.30px;width:24.20px;height:2.60px;background:#444746;"></div>
<div style="position:absolute;left:155.00px;top:1137.20px;width:24.20px;height:2.60px;background:#444746;"></div>
<div style="position:absolute;left:155.00px;top:1144.10px;width:24.20px;height:2.60px;background:#444746;"></div>
<div style="position:absolute;left:219.80px;top:1109.00px;width:282.50px;height:60.00px;background:#e1e9f7;"></div>
<div style="position:absolute;left:238.50px;top:1126.17px;font-size:25px;line-height:27.925px;color:#0b57d0;font-weight:bold;text-align:left;white-space:nowrap;">Inventory Planner</div>
<svg style="position:absolute;left:469.90px;top:1135.60px" width="13" height="7.4" viewBox="0 0 13 7.4"><path d="M0 0H13L6.5 7.4Z" fill="#0b57d0"/></svg>
<div style="position:absolute;left:521.50px;top:1125.45px;font-size:25.8px;line-height:28.819px;color:#444746;font-weight:normal;text-align:left;white-space:nowrap;">inventory_data</div>
<svg style="position:absolute;left:711.20px;top:1135.60px" width="12.6" height="7.4" viewBox="0 0 12.6 7.4"><path d="M0 0H12.6L6.3 7.4Z" fill="#444746"/></svg>
<svg style="position:absolute;left:2104.00px;top:1131.00px" width="16" height="22" viewBox="0 0 16 22"><path d="M12.5 2.5L4 11L12.5 19.5" fill="none" stroke="#444746" stroke-width="2.6"/></svg>
</div>
</body></html>
